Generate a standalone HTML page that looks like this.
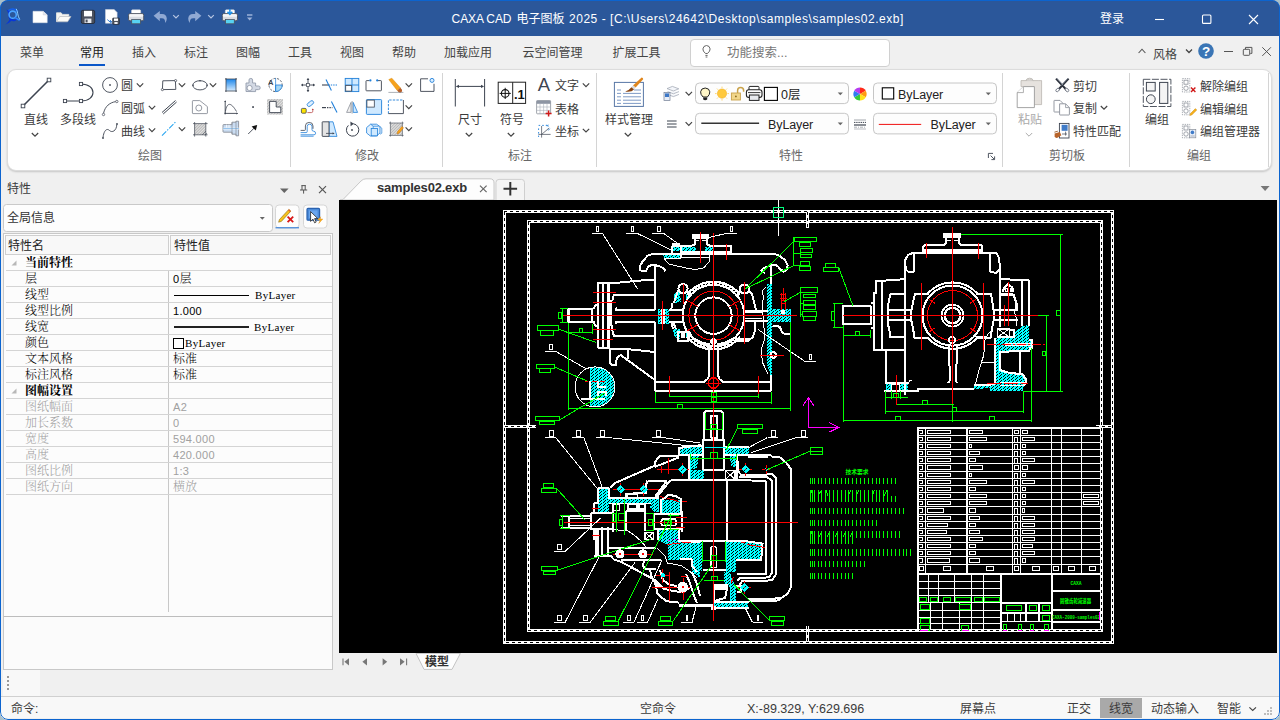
<!DOCTYPE html>
<html lang="zh-CN">
<head>
<meta charset="utf-8">
<title>CAXA CAD 电子图板 2025</title>
<style>
*{box-sizing:border-box;margin:0;padding:0}
html,body{width:1280px;height:720px;overflow:hidden;background:#a9c0ca}
body{position:relative;font-family:"Liberation Sans","Noto Sans CJK SC",sans-serif;font-size:12px;color:#3b3b3b}
.abs{position:absolute}
.t{position:absolute;white-space:nowrap;line-height:16px;height:16px}
#win{position:absolute;left:0;top:0;width:1280px;height:720px;background:#f0f0f0;border-radius:8px;overflow:hidden}
#title{position:absolute;left:0;top:0;width:1280px;height:36px;background:#2b579a;color:#fff}
#title .t{color:#fff;font-size:13px}
#edgeL{position:absolute;left:0;top:0;width:1px;height:720px;background:#0d5bc4}
#edgeR{position:absolute;left:1279px;top:0;width:1px;height:720px;background:#0d5bc4}
#edgeB{position:absolute;left:0;top:718.5px;width:1280px;height:1.5px;background:#0d5bc4}
#tabs .t{font-size:12px;color:#444;top:45px}
#ribbon{position:absolute;left:7px;top:69px;width:1265px;height:101.5px;background:#fff;border:1px solid #dcdcdc;border-radius:9px;box-shadow:0 1px 2px rgba(0,0,0,.18)}
.sep{position:absolute;top:75px;width:1px;height:92px;background:#d8d8d8}
.gl{position:absolute;z-index:6;top:148px;margin-top:1px;font-size:12px;color:#666;line-height:16px;white-space:nowrap}
.rl{position:absolute;z-index:6;margin-top:1px;font-size:12px;color:#3b3b3b;line-height:16px;white-space:nowrap}
.combo{position:absolute;height:21px;background:#fff;border:1px solid #c8c8c8;border-radius:4px}
svg{position:absolute;overflow:visible}
#panel{position:absolute;left:0;top:178px;width:336px;height:492px}
.pg{font-family:"Liberation Serif","Noto Serif CJK SC",serif;font-size:12px;color:#000;font-weight:300}
.mono{font-family:"Liberation Sans",sans-serif;font-size:11px;letter-spacing:.3px;font-weight:400}
.row{position:absolute;left:6px;width:326px;height:16px;border-bottom:1px solid #d4d4d4}
.row .n{position:absolute;left:19px;top:0px;line-height:16px;white-space:nowrap}
.row .v{position:absolute;left:167px;top:0px;line-height:16px;white-space:nowrap}
.row.dis{color:#a0a0a0}
.row.hd{font-weight:bold}
#canvas{position:absolute;left:339px;top:200px;width:938px;height:453px;background:#000}
#status{position:absolute;left:1px;top:696px;width:1278px;height:22px;background:#f8f8f8;border-top:1px solid #d0d0d0}
#status .t{top:4px;font-size:12px;color:#3b3b3b}
</style>
</head>
<body>
<div id="win">
<div id="title">
<div class="t" style="left:451.6px;top:11px;font-size:12px;letter-spacing:-0.12px">CAXA CAD</div><div class="t" style="left:516.5px;top:11px;font-size:12px">电子图板</div><div class="t" style="left:569px;top:11px;font-size:12px;letter-spacing:0.53px">2025 - [C:\Users\24642\Desktop\samples\samples02.exb]</div>
<div class="t" style="left:1100px;top:11px;font-size:12px">登录</div>
<!--TITLEICONS-->
</div>
<div id="tabs">
<div class="t" style="left:20px">菜单</div>
<div class="t" style="left:80px;color:#222">常用</div>
<div class="abs" style="left:79px;top:64px;width:26px;height:2px;background:#0a57c9"></div>
<div class="t" style="left:132px">插入</div>
<div class="t" style="left:184px">标注</div>
<div class="t" style="left:236px">图幅</div>
<div class="t" style="left:288px">工具</div>
<div class="t" style="left:340px">视图</div>
<div class="t" style="left:392px">帮助</div>
<div class="t" style="left:444px">加载应用</div>
<div class="t" style="left:522.5px">云空间管理</div>
<div class="t" style="left:612.5px">扩展工具</div>
<div class="abs" style="left:690px;top:39px;width:200px;height:28px;background:#fff;border:1px solid #d0d0d0;border-radius:4px"></div>
<div class="t" style="left:727px;color:#777;font-size:12.5px">功能搜索...</div>
<div class="t" style="left:1153px;top:46.5px">风格</div>
<!--TABICONS-->
</div>
<div id="ribbon"></div>
<svg style="left:0;top:0;z-index:5" width="1280" height="175" viewBox="0 0 1280 175">
<g><path d="M6,9.4 C9.2,11.6 7.6,16.6 9.6,19.4 C8.6,21.4 7,23.2 5.4,24.6 C7.8,23.8 9.8,22.4 11.2,20.8 C13.6,21.8 16.2,21 17.2,19.2 C14.8,19.8 12.4,19.4 11,18.2 C9.2,16 9.4,12.6 11.4,11 C9.6,10.6 7.6,10.2 6,9.4 Z" fill="#0836d8"/><circle cx="12.7" cy="14.7" r="3.6" fill="none" stroke="#4aa3ff" stroke-width="1.6"/><path d="M8.4,10.6 C11,8.2 15.6,8.4 17.6,11.6" stroke="#1260ee" stroke-width="1.6" fill="none"/><path d="M16.2,8.8 C18,11.6 17,14.4 19.8,19.8" stroke="#8accff" stroke-width="1" fill="none"/><path d="M14.8,17.4 L19.6,20.4" stroke="#2f86ff" stroke-width="1.4" fill="none"/></g>
<path d="M33,11.3 h10.2 l4,3.6 v7.8 h-14.2 z" fill="#fff" stroke="#d9dde6" stroke-width=".6"/><path d="M43.2,11.3 v3.6 h4" fill="#e6e9f0" stroke="#c9ced8" stroke-width=".5"/>
<path d="M56.5,21.8 v-9 h4.6 l1.4,1.6 h6.3 v2.2" fill="#f4f4f0" stroke="#e8e8e2" stroke-width=".8"/><path d="M56.5,21.8 l3.2,-5.3 h11.3 l-3.4,5.3 z" fill="#fbfbf7" stroke="#b9bcc0" stroke-width=".7"/>
<rect x="81.3" y="10.3" width="13.4" height="13.2" rx="1.6" fill="#4b515e" stroke="#232833" stroke-width=".8"/><rect x="84" y="10.8" width="8" height="5.6" fill="#fff"/><rect x="84.6" y="18.6" width="6.8" height="4.4" fill="#e9ebf0"/><rect x="85.6" y="19.6" width="2" height="2.8" fill="#4b515e"/>
<path d="M105.5,9.6 h8.6 l3,2.8 v10.8 h-11.6 z" fill="#fff" stroke="#d0d4dc" stroke-width=".6"/><path d="M107.5,19.5 q1,2.5 4,2.3 m-1.5,-1.6 l1.8,1.6 l-1.8,1.4" fill="none" stroke="#2a78d4" stroke-width="1"/><rect x="112.6" y="18" width="6.8" height="6.4" rx=".8" fill="#4b515e" stroke="#232833" stroke-width=".6"/><rect x="114" y="18.5" width="4" height="2.4" fill="#fff"/><rect x="114.4" y="22" width="3.2" height="2" fill="#e9ebf0"/>
<path d="M131.5,14 v-3.2 q0,-1 1,-1 h7.2 q1,0 1,1 v3.2 z" fill="#fff" stroke="#d5d8de" stroke-width=".5"/><rect x="128.5" y="13.6" width="15.2" height="7.2" rx="1.6" fill="#d9dce2" stroke="#4b515e" stroke-width=".9"/><rect x="129.1" y="14.2" width="14" height="2.6" rx="1" fill="#f4f5f7"/><rect x="131.7" y="19.4" width="8.8" height="4.4" fill="#58d3f2" stroke="#4b515e" stroke-width=".8"/>
<path d="M153.6,15.8 l6.2,-4.8 v3 h2.2 q4.6,.2 4.8,4.8 q0,2.4 -1.8,4.2 q.6,-4.6 -3.2,-4.8 h-2 v3 z" fill="#90a9d3"/>
<path d="M173.2,15.200000000000001 L176,18.0 L178.8,15.200000000000001" fill="none" stroke="#b7c6e2" stroke-width="1.2"/>
<path d="M201.4,15.8 l-6.2,-4.8 v3 h-2.2 q-4.6,.2 -4.8,4.8 q0,2.4 1.8,4.2 q-.6,-4.6 3.2,-4.8 h2 v3 z" fill="#90a9d3"/>
<path d="M208.2,15.200000000000001 L211,18.0 L213.8,15.200000000000001" fill="none" stroke="#b7c6e2" stroke-width="1.2"/>
<path d="M225.3,14 v-3.2 q0,-1 1,-1 h7.2 q1,0 1,1 v3.2 z" fill="#fff" stroke="#d5d8de" stroke-width=".5"/><rect x="222.3" y="13.6" width="15.2" height="7.2" rx="1.6" fill="#d9dce2" stroke="#4b515e" stroke-width=".9"/><rect x="222.9" y="14.2" width="14" height="2.6" rx="1" fill="#f4f5f7"/><rect x="225.5" y="19.4" width="8.8" height="4.4" fill="#58d3f2" stroke="#4b515e" stroke-width=".8"/><path d="M229.9,9 v5 m-2.4,-2.2 l2.4,2.6 l2.4,-2.6" fill="none" stroke="#1a8fe8" stroke-width="1.5"/>
<path d="M247,15 h5.4" stroke="#9db2d8" stroke-width="1.3"/><path d="M247,17.4 h5.4 l-2.7,3.2 z" fill="#9db2d8"/>
<path d="M1155,19.5 h9" stroke="#fff" stroke-width="1.1"/>
<rect x="1202.5" y="15" width="8.4" height="8.4" rx="1" fill="none" stroke="#fff" stroke-width="1.1"/>
<path d="M1249,15 l9,9 m0,-9 l-9,9" stroke="#fff" stroke-width="1.1"/>
<path d="M1138.6,53 l3.4,-3.8 l3.4,3.8" fill="none" stroke="#555" stroke-width="1.1"/>
<path d="M1186,49.5 L1189,52.5 L1192,49.5" fill="none" stroke="#444" stroke-width="1.3"/>
<circle cx="1206" cy="51" r="7.8" fill="#3a75b5"/><text x="1206" y="56" font-size="13.5" font-weight="bold" fill="#fff" text-anchor="middle" font-family="Liberation Sans,sans-serif">?</text>
<path d="M1224,51.5 h9" stroke="#555" stroke-width="1"/>
<path d="M1245.5,49 v-1.6 h6.4 v6 h-1.6" fill="none" stroke="#555" stroke-width="1"/><rect x="1243.3" y="49.3" width="6.4" height="6" rx=".8" fill="none" stroke="#555" stroke-width="1"/>
<path d="M1262.3,47.3 l8.6,8.6 m0,-8.6 l-8.6,8.6" stroke="#555" stroke-width="1"/>
<path d="M705.5,53.5 q-2.8,-2.4 -2.6,-4.6 q.4,-3.2 3.6,-3.4 q3.2,.2 3.6,3.4 q.2,2.2 -2.6,4.6 z M705.4,55.4 h2.2 M705.6,57 h1.8" fill="none" stroke="#666" stroke-width="1"/>
<path d="M23,106 L49,80" stroke="#3d4450" stroke-width="1.6"/><rect x="21.2" y="104.2" width="3.6" height="3.6" fill="#fff" stroke="#3d4450" stroke-width="0.9"/><rect x="47.2" y="78.2" width="3.6" height="3.6" fill="#fff" stroke="#3d4450" stroke-width="0.9"/>
<path d="M31.8,133.0 L35,136.2 L38.2,133.0" fill="none" stroke="#444" stroke-width="1.2"/>
<path d="M65,101 H81 M81,84 C97,84 97,101 81,101" fill="none" stroke="#3d4450" stroke-width="1.1"/><rect x="63.4" y="99.4" width="3.2" height="3.2" fill="#fff" stroke="#3d4450" stroke-width="0.9"/><rect x="79.4" y="99.4" width="3.2" height="3.2" fill="#fff" stroke="#3d4450" stroke-width="0.9"/><rect x="79.4" y="82.4" width="3.2" height="3.2" fill="#fff" stroke="#3d4450" stroke-width="0.9"/>
<circle cx="110" cy="85" r="7.4" fill="none" stroke="#3d4450" stroke-width=".9"/><rect x="109.2" y="84.2" width="1.6" height="1.6" fill="#3d4450"/>
<path d="M136.8,83.4 L140,86.6 L143.2,83.4" fill="none" stroke="#444" stroke-width="1.2"/>
<path d="M103.5,113.5 C105,106 110,102.5 115.8,101.6" fill="none" stroke="#3d4450" stroke-width=".9"/><circle cx="103.5" cy="114.5" r="1.2" fill="#fff" stroke="#3d4450" stroke-width=".7"/><circle cx="116.8" cy="101.5" r="1.2" fill="#fff" stroke="#3d4450" stroke-width=".7"/>
<path d="M148.8,105.9 L152,109.1 L155.2,105.9" fill="none" stroke="#444" stroke-width="1.2"/>
<path d="M103,137.5 C104,130 107,128 109.5,130.5 C112,133 116.5,131 116.8,124.5" fill="none" stroke="#3d4450" stroke-width=".9"/><circle cx="103" cy="138" r=".9" fill="#3d4450"/><circle cx="117" cy="124" r=".9" fill="#3d4450"/>
<path d="M148.8,128.4 L152,131.6 L155.2,128.4" fill="none" stroke="#444" stroke-width="1.2"/>
<path d="M162.8,80.8 L175.4,80.6 L175.8,89.4 L162.4,89.6 Z" fill="none" stroke="#3d4450" stroke-width=".9"/><circle cx="162.4" cy="89.6" r="1.1" fill="#fff" stroke="#3d4450" stroke-width=".7"/><circle cx="175.6" cy="80.6" r="1.1" fill="#fff" stroke="#3d4450" stroke-width=".7"/>
<path d="M178.8,83.4 L182,86.6 L185.2,83.4" fill="none" stroke="#444" stroke-width="1.2"/>
<ellipse cx="200" cy="85.3" rx="7.2" ry="4.6" fill="none" stroke="#3d4450" stroke-width=".9"/><circle cx="200" cy="80.7" r=".8" fill="#3d4450"/><circle cx="193" cy="85.3" r=".8" fill="#3d4450"/><circle cx="207" cy="85.3" r=".8" fill="#3d4450"/>
<path d="M209.8,83.4 L213,86.6 L216.2,83.4" fill="none" stroke="#444" stroke-width="1.2"/>
<defs><linearGradient id="gb" x1="0" y1="0" x2="0" y2="1"><stop offset="0" stop-color="#1b86ea"/><stop offset="1" stop-color="#d6ecff"/></linearGradient></defs>
<rect x="226" y="79" width="10" height="12" fill="url(#gb)"/><path d="M225,79 h12 M225,91 h12 M226,78 v14 M236,78 v14" stroke="#3d4450" stroke-width=".8"/>
<path d="M246,91.5 v-8.5 h3 v-3 q0,-1.6 1.8,-1.6 q1.8,0 1.8,1.6 v3 h3 v3 h3 q1.6,0 1.6,1.8 q0,1.8 -1.6,1.8 h-3 v2 z" fill="#d3d9e4" stroke="#949dad" stroke-width=".9"/><circle cx="249.6" cy="88" r="2.6" fill="#fff" stroke="#8a93a3" stroke-width=".8"/>
<circle cx="275.6" cy="85" r="6.6" fill="none" stroke="#3d4450" stroke-width=".8" stroke-dasharray="2.2 1.4"/><path d="M275.6,85 h6.6 a6.6,6.6 0 0 1 -6.6,6.6 z" fill="#a8d8f5" stroke="#1f7fd9" stroke-width=".8"/><path d="M275.6,78 v13.6" stroke="#1f7fd9" stroke-width=".7"/><text x="268" y="84.5" font-size="7.5" font-weight="bold" fill="#3d4450" font-family="Liberation Sans,sans-serif">A</text>
<path d="M162,112.5 L175.5,100.5 M163.2,114 L176.6,102" stroke="#3d4450" stroke-width="1"/>
<path d="M193,100.6 h6.8 l7.6,6 v6.4 q0,.6 -.6,.6 h-13.8 q-.6,0 -.6,-.6 v-11.8 q0,-.6 .6,-.6 z" fill="none" stroke="#8a8f98" stroke-width=".9"/><circle cx="198.8" cy="108" r="3" fill="none" stroke="#8a8f98" stroke-width=".9"/>
<path d="M225.2,101 v12.4 h12.2" fill="none" stroke="#3d4450" stroke-width=".9"/><path d="M225.4,111.5 C227,102 231,102 236.5,111.5" fill="none" stroke="#3d4450" stroke-width=".8"/><path d="M225.2,100.2 l-1,1.8 h2 z M238.2,113.4 l-1.8,-1 v2 z" fill="#3d4450"/><circle cx="225.2" cy="113.4" r=".9" fill="#3d4450"/>
<rect x="252.2" y="106.2" width="1.7" height="1.7" fill="#3d4450"/>
<defs><pattern id="hh" width="2" height="2" patternUnits="userSpaceOnUse" patternTransform="rotate(45)"><rect width="2" height="2" fill="#e3e3e3"/><rect width="1" height="2" fill="#b9b9b9"/></pattern></defs>
<rect x="267" y="99" width="16" height="15.6" fill="url(#hh)"/><path d="M269.6,101.4 h6.6 v5.6 h4.6 v5.6 h-11.2 z" fill="#fff" stroke="#3d4450" stroke-width=".9"/>
<path d="M162,135.7 L175.6,122" stroke="#2aa6f0" stroke-width="1.1" stroke-dasharray="6 1.4 1.4 1.4"/>
<path d="M178.8,127.4 L182,130.6 L185.2,127.4" fill="none" stroke="#444" stroke-width="1.2"/>
<rect x="194.6" y="123.6" width="11.2" height="11.2" fill="url(#hh)"/><path d="M193,123.6 h14.6 M193,134.8 h14.6 M194.6,122 v14.6 M205.8,122 v14.6" stroke="#3d4450" stroke-width=".7"/><path d="M205.8,131 l-3.6,3.8 M207,133 l-2,2.4" stroke="#3d4450" stroke-width=".6"/>
<path d="M223.6,124.6 h8.4 v-2.4 h4 v-1 h2.6 v14.6 h-2.6 v-1.6 h-4 v-2 h-8.4 q-.6,0 -.6,-.6 v-6.4 q0,-.6 .6,-.6 z" fill="#c9dcf2" stroke="#8a8f98" stroke-width=".9"/><path d="M223,128.6 h16" stroke="#fff" stroke-width="1.6"/><path d="M223,128.6 h16" stroke="#1f7fd9" stroke-width=".5"/><path d="M232,122.4 v11.8 M236,121.4 v14" stroke="#8a8f98" stroke-width=".7"/><path d="M226.6,124.6 v3 M229,124.6 v3" stroke="#fff" stroke-width=".8"/>
<path d="M248.2,134 L254.6,127.6" stroke="#3d4450" stroke-width=".9"/><path d="M257.2,125 l-1.4,5.6 l-4.2,-4.2 z" fill="#111"/>
<path d="M301.6,85 h13 M308,78.6 v13" stroke="#3d4450" stroke-width=".9"/><rect x="306.6" y="83.6" width="2.8" height="2.8" fill="#fff" stroke="#3d4450" stroke-width=".7"/><path d="M301,85 l2,-1.4 v2.8 z M315,85 l-2,-1.4 v2.8 z M308,78 l-1.4,2 h2.8 z M308,92 l-1.4,-2 h2.8 z" fill="#3d4450"/>
<path d="M322,85 h7.6" stroke="#3d4450" stroke-width="1.1"/><path d="M330.8,85 h6.6" stroke="#1f7fd9" stroke-width="1" stroke-dasharray="1.4 1"/><path d="M326,79.6 L331.4,90.6" stroke="#1f7fd9" stroke-width="1.1"/>
<rect x="345.2" y="78.4" width="13.6" height="13.2" fill="#cfe9ff" stroke="#1f7fd9" stroke-width=".9"/><path d="M352,78.4 v13.2 M345.2,85 h13.6" stroke="#1f7fd9" stroke-width=".9"/><rect x="345.7" y="85.5" width="5.8" height="5.6" fill="#fff" stroke="#3d4450" stroke-width=".8"/>
<path d="M369.6,80.6 h-3 q-.6,0 -.6,.6 v9 q0,.6 .6,.6 h14.2 q.6,0 .6,-.6 v-9 q0,-.6 -.6,-.6 h-3" fill="none" stroke="#3d4450" stroke-width=".9"/><circle cx="370.4" cy="80.4" r="1.1" fill="#1f7fd9"/><circle cx="377.2" cy="80.4" r="1.1" fill="#1f7fd9"/>
<path d="M388.8,79.6 l3,-1.4 l8.6,9.6 l-3.2,2.6 z" fill="#f6a21c" stroke="#d88a10" stroke-width=".5"/><path d="M397.2,90.4 l3.2,-2.6 l1.6,2 q.6,1.8 -1,2.6 q-1.6,.8 -2.6,-.4 z" fill="#b8602a"/><path d="M388.4,92.4 h15" stroke="#8a8f98" stroke-width=".7"/>
<path d="M405.6,83.4 L408.8,86.6 L412.0,83.4" fill="none" stroke="#444" stroke-width="1.2"/>
<path d="M428,78.8 h-7.4 v12.6 h13.4 v-7.6" fill="none" stroke="#3d4450" stroke-width=".9"/><circle cx="432" cy="80.4" r="2" fill="#dff0ff" stroke="#1f7fd9" stroke-width=".9"/>
<rect x="-1.8" y="-3.6" width="3.6" height="7.2" rx="1.8" transform="translate(310.4,103.6) rotate(52)" fill="#dff0ff" stroke="#1f7fd9" stroke-width=".8"/><rect x="301.4" y="108.4" width="4.8" height="4.8" rx="1" fill="#ffe400" stroke="#3d4450" stroke-width=".8"/><path d="M307.4,112.6 h4 q1.4,0 1.4,-1.4 v-1.6" fill="none" stroke="#b03030" stroke-width=".7"/><path d="M312.8,108.6 l-1,1.4 h2 z" fill="#b03030"/>
<path d="M322,107.6 h4" stroke="#3d4450" stroke-width="1.2"/><path d="M327,107.6 h5.4" stroke="#3d4450" stroke-width="1.1" stroke-dasharray="1.4 1"/><path d="M331.4,101.4 L337,112.6" stroke="#1f7fd9" stroke-width="1.1"/>
<path d="M351,102.4 v10 l-4.4,0 z" fill="#f0f0f0" stroke="#8a8f98" stroke-width=".8"/><path d="M353.2,102.4 v10 h4.4 z" fill="#cfe9ff" stroke="#1f7fd9" stroke-width=".8"/><path d="M352.1,101 v12.6" stroke="#8a8f98" stroke-width=".8"/>
<rect x="366.4" y="99.6" width="15.2" height="14.8" rx=".8" fill="#cfe9ff" stroke="#1f7fd9" stroke-width=".9"/><rect x="366.9" y="100.1" width="7.4" height="7" fill="#fff" stroke="#3d4450" stroke-width=".8"/>
<path d="M388.4,113.6 v-13.6 h15" fill="none" stroke="#1f7fd9" stroke-width=".9" stroke-dasharray="2.4 1.2"/><path d="M388.4,113.6 h15 v-13.6" fill="none" stroke="#3d4450" stroke-width=".9"/>
<path d="M405.6,105.4 L408.8,108.6 L412.0,105.4" fill="none" stroke="#444" stroke-width="1.2"/>
<path d="M300.6,132.6 h5.6 q1,0 1,-1 v-5 q0,-2.4 2.4,-2.4 q2.4,0 2.4,2.4 v3 q0,1.6 1.6,1.6 q2,.2 2,2 q0,1.6 -1.6,1.6 h-13.4" fill="none" stroke="#1f7fd9" stroke-width=".8"/><path d="M300.6,130.4 h4 q.8,0 .8,-.8 v-3.6 q0,-3.6 3.8,-3.6 q3.8,0 3.8,3.6 v2.8" fill="none" stroke="#3d4450" stroke-width=".8"/><path d="M300.6,136.2 h13" stroke="#1f7fd9" stroke-width=".8"/>
<path d="M329,121.8 h4 l4,14.6 h-8 z" fill="#cfe9ff" stroke="#1f7fd9" stroke-width=".8"/><path d="M322.6,121.8 h6.4 v14.6 h-6.4 q-.4,0 -.4,-.4 v-13.8 q0,-.4 .4,-.4 z" fill="#e4e4e4" stroke="#3d4450" stroke-width=".9"/><path d="M326,133.4 h7" stroke="#3d4450" stroke-width=".8"/><path d="M334.6,133.4 l-2,-1.2 v2.4 z" fill="#3d4450"/>
<path d="M348.4,125.4 a6.2,6.2 0 1 0 5,-1.6" fill="none" stroke="#3d4450" stroke-width="1"/><path d="M350.4,121.6 l3.4,2.2 l-3.2,2.4 z" fill="#3d4450"/><circle cx="352" cy="130" r=".9" fill="#3d4450"/>
<path d="M366.6,127.6 l4,-3.4 h6 l3.4,2.4 v6.4 l-3.6,3 h-6 l-3.8,-3 z" fill="#dff0ff" stroke="#1f7fd9" stroke-width=".8"/><rect x="371.2" y="128.4" width="6.2" height="7.4" fill="#cfe9ff" stroke="#1f7fd9" stroke-width=".8"/><path d="M370.6,124.2 l2.6,2 h5.6 M373.2,126.2 v2 M380,126.6 l1.8,1.6 v5 l-1.8,1" fill="none" stroke="#1f7fd9" stroke-width=".7"/>
<rect x="390.4" y="123" width="12" height="12.4" fill="url(#hh)"/><path d="M389,123 h14.6 M389,135.4 h14.6 M390.4,121.6 v15 M402.4,121.6 v15" stroke="#3d4450" stroke-width=".6"/><path d="M397.4,131.8 l4.4,-5.4 l1.8,1.4 l-4.4,5.4 l-2.2,.8 z" fill="#f6a21c" stroke="#b56a10" stroke-width=".4"/>
<path d="M405.6,127.4 L408.8,130.6 L412.0,127.4" fill="none" stroke="#444" stroke-width="1.2"/>
<path d="M455.3,79 v27.5 M484.6,79 v27.5 M456.6,86.4 h26.6" stroke="#3d4450" stroke-width="1"/><path d="M456,86.4 l3,-1.6 v3.2 z M484,86.4 l-3,-1.6 v3.2 z" fill="#3d4450"/>
<path d="M465.8,133.0 L469,136.2 L472.2,133.0" fill="none" stroke="#444" stroke-width="1.2"/>
<path d="M507.8,133.0 L511,136.2 L514.2,133.0" fill="none" stroke="#444" stroke-width="1.2"/>
<rect x="498.2" y="82.2" width="27.4" height="21.2" fill="#fff" stroke="#222" stroke-width="1"/><path d="M512.7,82.2 v21.2" stroke="#222" stroke-width="1"/><circle cx="505.2" cy="93.4" r="3.8" fill="none" stroke="#111" stroke-width="1.1"/><path d="M499.6,93.4 h11.2 M505.2,87.8 v11.2" stroke="#111" stroke-width="1"/><text x="514" y="98.6" font-size="13" font-weight="bold" fill="#111" font-family="Liberation Sans,sans-serif">.1</text>
<text x="544" y="91.4" font-size="18.5" fill="#3d4450" text-anchor="middle" font-family="Liberation Sans,sans-serif">A</text>
<path d="M582.8,83.4 L586,86.6 L589.2,83.4" fill="none" stroke="#444" stroke-width="1.2"/>
<path d="M582.8,128.8 L586,132.0 L589.2,128.8" fill="none" stroke="#444" stroke-width="1.2"/>
<rect x="536.6" y="100.6" width="14" height="13.2" rx=".8" fill="#fff" stroke="#8a8f98" stroke-width=".8"/><rect x="536.6" y="100.6" width="14" height="3.2" fill="#8d95a3"/><path d="M540,103.8 v10 M543.6,103.8 v10 M547,103.8 v10 M536.6,107 h14 M536.6,110.4 h14" stroke="#aab0bb" stroke-width=".6"/><path d="M545.6,113.4 h6 M548.6,110.4 v6" stroke="#d01818" stroke-width="1.5"/>
<path d="M541.6,126 v11.6 M538.4,134.4 h12.2 M541.6,134.4 l7.6,-6.4" stroke="#3d4450" stroke-width=".7"/><path d="M538.6,125.4 h10.4 M538.6,128.4 v8.6" stroke="#1f7fd9" stroke-width=".9" stroke-dasharray="1.6 2"/><path d="M546.8,124.8 l2,1.8 m0,-1.8 l-2,1.8 M548.2,130.6 l1.6,-2 m-1.6,0 l.8,1" stroke="#1f7fd9" stroke-width=".6" fill="none"/>
<rect x="614.4" y="82.4" width="29" height="24" fill="#fff" stroke="#5877a6" stroke-width="1"/><path d="M617,90 h4 M617,93.4 h4 M617,96.8 h4 M617,100.2 h4 M617,103.4 h4 M623,93.4 h18 M623,96.8 h18 M623,100.2 h18 M623,103.4 h18 M634,90 h7" stroke="#6f8fc0" stroke-width=".9"/><path d="M641.6,77.4 q1.6,.2 1.6,1.8 l-7.6,8.4 l-2.6,-2.2 z" fill="#e0861c"/><path d="M633,85.4 l2.6,2.2 l-1.6,1.8 l-2.6,-2.2 z" fill="#d9d9d9"/><path d="M631.4,87.2 l2.6,2.2 q-2.4,3.2 -8.8,2.2 q3.4,-.8 6.2,-4.4 z" fill="#8a4510"/>
<path d="M624.8,133.0 L628,136.2 L631.2,133.0" fill="none" stroke="#444" stroke-width="1.2"/>
<path d="M667,88.6 l5.4,-2.2 l6.4,2.4 l-5.4,2.2 z M667.6,91.6 l5.8,2.2 l5.6,-2.2 M667.6,94.4 l5.8,2.2 l5.6,-2.2" fill="#f4f6fa" stroke="#9aa1ad" stroke-width=".7"/><rect x="664" y="92.4" width="6" height="8" fill="#e8eef8" stroke="#6f7c92" stroke-width=".7"/><rect x="665" y="93.4" width="4" height="3.6" fill="#3d78c6"/>
<path d="M685.5999999999999,91.9 L688.8,95.1 L692.0,91.9" fill="none" stroke="#444" stroke-width="1.2"/>
<path d="M685.5999999999999,122.10000000000001 L688.8,125.3 L692.0,122.10000000000001" fill="none" stroke="#444" stroke-width="1.2"/>
<path d="M667,121 h9.6 M667,124 h9.6 M667,127 h9.6" stroke="#3d4450" stroke-width="1.1"/>
<rect x="695.5" y="83" width="153" height="20.6" rx="4" fill="#fdfdfd" stroke="#c6c6c6" stroke-width="1"/>
<rect x="695.5" y="113.3" width="153" height="20.6" rx="4" fill="#fdfdfd" stroke="#c6c6c6" stroke-width="1"/>
<rect x="873.5" y="83" width="123" height="20.6" rx="4" fill="#fdfdfd" stroke="#c6c6c6" stroke-width="1"/>
<rect x="873.5" y="113.3" width="123" height="20.6" rx="4" fill="#fdfdfd" stroke="#c6c6c6" stroke-width="1"/>
<path d="M837.6999999999999,92.5 h5.2 l-2.6,2.8 z" fill="#666"/>
<path d="M837.6999999999999,122.5 h5.2 l-2.6,2.8 z" fill="#666"/>
<path d="M985.6999999999999,92.5 h5.2 l-2.6,2.8 z" fill="#666"/>
<path d="M985.6999999999999,122.5 h5.2 l-2.6,2.8 z" fill="#666"/>
<path d="M703,97 q-2.6,-2.6 -2.4,-5.2 q.4,-3.6 4.6,-3.8 q4.2,.2 4.6,3.8 q.2,2.6 -2.4,5.2 z" fill="#fff6c8" stroke="#222" stroke-width="1"/><path d="M703.2,97.4 h4 v2 q-2,1.6 -4,0 z" fill="#222"/>
<circle cx="722" cy="93.6" r="4.6" fill="#ffc93c" stroke="#f2ae1c" stroke-width=".6"/><path d="M722,86.6 v1.6 M722,99 v1.6 M715,93.6 h1.6 M727.4,93.6 h1.6 M717,88.6 l1.2,1.2 M725.8,97.4 l1.2,1.2 M727,88.6 l-1.2,1.2 M718.2,97.4 l-1.2,1.2" stroke="#ffd873" stroke-width="1"/>
<path d="M737.6,93 v-2.6 q0,-3 3,-3 q3,0 3,3 v1.4" fill="none" stroke="#c9a24a" stroke-width="1.5"/><rect x="731.4" y="93" width="9" height="7" fill="#f1d68a" stroke="#c9a24a" stroke-width=".9"/><circle cx="735.9" cy="96.4" r=".9" fill="#8a6a1c"/>
<path d="M749,90 v-2.6 q0,-1 1,-1 h8 q1,0 1,1 v2.6" fill="#fff" stroke="#222" stroke-width="1"/><rect x="746.4" y="89.8" width="15.6" height="7.6" rx="2.4" fill="#fff" stroke="#222" stroke-width="1.1"/><path d="M748,92.6 h12.4" stroke="#222" stroke-width=".9"/><rect x="749.4" y="95" width="9.6" height="5.4" fill="#e8eaee" stroke="#222" stroke-width="1"/>
<rect x="764.4" y="87.4" width="13" height="13" fill="#fff" stroke="#000" stroke-width="1.1"/>
<rect x="882.3" y="87.8" width="11.4" height="11.2" fill="#fff" stroke="#000" stroke-width="1.1"/>
<path d="M701.3,123.3 h57.8" stroke="#333" stroke-width="1.6"/>
<path d="M878.8,124.4 h42.4" stroke="#f01010" stroke-width="1"/>
<path d="M860,94 L860.00,87.40 A6.6,6.6 0 0 1 865.72,90.70 Z" fill="#ff2a1a"/>
<path d="M860,94 L865.72,90.70 A6.6,6.6 0 0 1 865.72,97.30 Z" fill="#ff9a10"/>
<path d="M860,94 L865.72,97.30 A6.6,6.6 0 0 1 860.00,100.60 Z" fill="#ffe21a"/>
<path d="M860,94 L860.00,100.60 A6.6,6.6 0 0 1 854.28,97.30 Z" fill="#35c93a"/>
<path d="M860,94 L854.28,97.30 A6.6,6.6 0 0 1 854.28,90.70 Z" fill="#2f7cf0"/>
<path d="M860,94 L854.28,90.70 A6.6,6.6 0 0 1 860.00,87.40 Z" fill="#b63cf0"/>
<path d="M854,120 h12" stroke="#8a8f98" stroke-width=".8"/><path d="M854,122.4 h12" stroke="#3d4450" stroke-width="1" stroke-dasharray="1.4 .8"/><path d="M854,125 h12" stroke="#3d4450" stroke-width="1.2"/><path d="M854,127.2 h12" stroke="#8a8f98" stroke-width=".7" stroke-dasharray="3 1 1 1"/><path d="M854,129 h12" stroke="#8a8f98" stroke-width=".6"/>
<path d="M988.4,158 v-4.6 h4.6" fill="none" stroke="#3d4450" stroke-width=".9"/><path d="M990.6,155.6 l3.6,3.6 M994.6,156.4 v3.2 h-3.2" fill="none" stroke="#3d4450" stroke-width=".9"/>
<path d="M1021,80.6 h5 q.4,-2.4 3.6,-2.4 q3.2,0 3.6,2.4 h5 q3.4,0 3.4,0 v24 h-8 v-18 h-12.6 z" fill="#e6e2de" stroke="#b9b5b0" stroke-width=".8"/><path d="M1023.4,86.6 h11 v21 h-17.2 v-15 z" fill="#fff" stroke="#9a9a9a" stroke-width=".9"/><path d="M1023.4,86.6 v6 h-6.2" fill="#fff" stroke="#9a9a9a" stroke-width=".8"/><path d="M1026,80.6 q.6,-1.2 3.6,-1.2 q3,0 3.6,1.2 z" fill="#fff" stroke="#b9b5b0" stroke-width=".6"/>
<path d="M1025.8,133.0 L1029,136.2 L1032.2,133.0" fill="none" stroke="#aaa" stroke-width="1"/>
<path d="M1056,78.6 L1066.6,90 M1068.6,78.6 L1058,90" stroke="#2c313b" stroke-width="2"/><path d="M1056.6,78 L1063.4,85.6 M1068,78 L1061.2,85.6" stroke="#8d95a3" stroke-width=".8"/><ellipse cx="1057.6" cy="90" rx="2" ry="1.4" transform="rotate(-45 1057.6 90)" fill="#fff" stroke="#6f7683" stroke-width=".9"/><ellipse cx="1067" cy="90" rx="2" ry="1.4" transform="rotate(45 1067 90)" fill="#fff" stroke="#6f7683" stroke-width=".9"/>
<path d="M1054.4,100.4 h5.6 l3,3 v8.6 h-8.6 q-.4,0 -.4,-.4 v-10.8 q0,-.4 .4,-.4 z" fill="#fff" stroke="#8a8f98" stroke-width=".9"/><path d="M1059.6,103.8 h6 l3.8,3.8 v7 q0,.4 -.4,.4 h-9 q-.4,0 -.4,-.4 z" fill="#fff" stroke="#8a8f98" stroke-width=".9"/><path d="M1065.6,103.8 v3.8 h3.8" fill="none" stroke="#8a8f98" stroke-width=".8"/>
<path d="M1100.8,106.0 L1104,109.19999999999999 L1107.2,106.0" fill="none" stroke="#444" stroke-width="1.2"/>
<rect x="1059.4" y="123.4" width="9.6" height="14.6" fill="#fff" stroke="#3d4450" stroke-width=".9"/><rect x="1061.6" y="124.8" width="6" height="6" fill="#3f7bc8"/><path d="M1062,134 h5 M1065.6,131.6 v4" stroke="#3d4450" stroke-width=".7"/><path d="M1054.6,133.6 l5.2,-1.6 l1.6,3.2 l-4.4,2.8 q-1.8,.2 -2.4,-1.4 z" fill="#b8642a"/><path d="M1054.4,132.2 l3.4,-1" stroke="#8a4510" stroke-width=".8"/>
<rect x="1143.3" y="79.3" width="27.6" height="27.2" fill="none" stroke="#3d4450" stroke-width=".9" stroke-dasharray="7 1.6"/><rect x="1146.4" y="82.4" width="8.8" height="8.6" fill="#f4f4f4" stroke="#3d4450" stroke-width="1"/><circle cx="1150.8" cy="99.2" r="4.4" fill="#f4f4f4" stroke="#3d4450" stroke-width="1"/><rect x="1159.6" y="82.4" width="8.2" height="21" fill="#f4f4f4" stroke="#3d4450" stroke-width="1"/>
<rect x="1182.4" y="78.6" width="7.4" height="13.4" fill="none" stroke="#8a8f98" stroke-width=".7" stroke-dasharray="1.4 .9"/><rect x="1184" y="80.19999999999999" width="4" height="4" fill="#fff" stroke="#8a8f98" stroke-width=".8"/><circle cx="1186" cy="88.19999999999999" r="2.2" fill="#fff" stroke="#8a8f98" stroke-width=".8"/>
<rect x="1182.4" y="101.4" width="7.4" height="13.4" fill="none" stroke="#8a8f98" stroke-width=".7" stroke-dasharray="1.4 .9"/><rect x="1184" y="103.0" width="4" height="4" fill="#fff" stroke="#8a8f98" stroke-width=".8"/><circle cx="1186" cy="111.0" r="2.2" fill="#fff" stroke="#8a8f98" stroke-width=".8"/>
<rect x="1182.4" y="124.4" width="7.4" height="13.4" fill="none" stroke="#8a8f98" stroke-width=".7" stroke-dasharray="1.4 .9"/><rect x="1184" y="126.0" width="4" height="4" fill="#fff" stroke="#8a8f98" stroke-width=".8"/><circle cx="1186" cy="134.0" r="2.2" fill="#fff" stroke="#8a8f98" stroke-width=".8"/>
<path d="M1191,87.6 l4.4,4.4 m0,-4.4 l-4.4,4.4" stroke="#d01818" stroke-width="1.4"/>
<path d="M1190.4,113.6 l5,-5 l1.4,1.4 l-5,5 l-2,.6 z" fill="#f6b01c" stroke="#c8860c" stroke-width=".4"/>
<rect x="1189.4" y="129.4" width="6.4" height="8.4" fill="#e8eef8" stroke="#8a8f98" stroke-width=".7"/><circle cx="1192.4" cy="132.4" r="1.8" fill="#3f7bc8"/><path d="M1190.4,136 h4.4" stroke="#8a8f98" stroke-width=".6"/>
<path d="M290.5,73 V167" stroke="#d4d4d4" stroke-width="1"/><path d="M442.5,73 V167" stroke="#d4d4d4" stroke-width="1"/><path d="M596.5,73 V167" stroke="#d4d4d4" stroke-width="1"/><path d="M1002.5,73 V167" stroke="#d4d4d4" stroke-width="1"/><path d="M1129.5,73 V167" stroke="#d4d4d4" stroke-width="1"/><path d="M1268.5,73 V167" stroke="#d4d4d4" stroke-width="1"/></svg>
<div class="rl" style="left:24px;top:111px;">直线</div>
<div class="rl" style="left:60px;top:111px;">多段线</div>
<div class="rl" style="left:121px;top:77px;">圆</div>
<div class="rl" style="left:121px;top:100px;">圆弧</div>
<div class="rl" style="left:121px;top:123px;">曲线</div>
<div class="gl" style="left:138px;top:147px;">绘图</div>
<div class="gl" style="left:355px;top:147px;">修改</div>
<div class="rl" style="left:458px;top:111px;">尺寸</div>
<div class="rl" style="left:500px;top:111px;">符号</div>
<div class="rl" style="left:555px;top:77px;">文字</div>
<div class="rl" style="left:555px;top:101px;">表格</div>
<div class="rl" style="left:555px;top:123px;">坐标</div>
<div class="gl" style="left:508px;top:147px;">标注</div>
<div class="rl" style="left:605px;top:111px;">样式管理</div>
<div class="rl" style="left:781px;top:85.5px;font-size:12.5px;color:#222">0层</div>
<div class="rl" style="left:768px;top:116px;font-size:12.5px;color:#222;letter-spacing:-0.1px">ByLayer</div>
<div class="rl" style="left:898px;top:85.5px;font-size:12.5px;color:#222;letter-spacing:-0.1px">ByLayer</div>
<div class="rl" style="left:930.5px;top:116px;font-size:12.5px;color:#222;letter-spacing:-0.1px">ByLayer</div>
<div class="gl" style="left:779px;top:147px;">特性</div>
<div class="rl" style="left:1018px;top:111px;color:#aaa">粘贴</div>
<div class="rl" style="left:1073px;top:77.5px;">剪切</div>
<div class="rl" style="left:1073px;top:100px;">复制</div>
<div class="rl" style="left:1073px;top:123px;">特性匹配</div>
<div class="gl" style="left:1049px;top:147px;">剪切板</div>
<div class="rl" style="left:1145px;top:111px;">编组</div>
<div class="rl" style="left:1200px;top:78px;">解除编组</div>
<div class="rl" style="left:1200px;top:100.5px;">编辑编组</div>
<div class="rl" style="left:1200px;top:123px;">编组管理器</div>
<div class="gl" style="left:1187px;top:147px;">编组</div>
<div class="t" style="left:7px;top:181px;font-size:12px;color:#3b3b3b">特性</div>
<svg style="left:0;top:170px" width="340" height="70" viewBox="0 170 340 70"><path d="M280,188.4 h8.6 l-4.3,4.6 z" fill="#666"/><path d="M301.4,185.6 h4.4 M302,185.6 v4.4 M305.2,185.6 v4.4 M300,190 h7.2 M303.6,190 v3.6" fill="none" stroke="#555" stroke-width="1"/><path d="M319,186.2 l7,7 m0,-7 l-7,7" stroke="#555" stroke-width="1.2"/><rect x="3.5" y="204.5" width="269" height="27" rx="3" fill="#fdfdfd" stroke="#c9c9c9"/><path d="M259.8,217 h5 l-2.5,2.8 z" fill="#666"/><rect x="275.5" y="205" width="23.5" height="23" rx="3.5" fill="#fdfdfd" stroke="#d6d6d6"/><path d="M275.5,227.8 h23.5" stroke="#1c6fd6" stroke-width="1"/><rect x="303.5" y="205" width="23.5" height="23" rx="3.5" fill="#fdfdfd" stroke="#d6d6d6"/><path d="M279.4,219.6 l9.4,-10.2 l2,1.8 l-9.4,10.2 l-2.8,.8 z" fill="#f6c21c" stroke="#8a6a1c" stroke-width=".6"/><path d="M288,210.2 l2,1.8 l1,-1 l-2,-1.8 z" fill="#e8602a"/><path d="M287.6,216.6 l5.6,5.6 m0,-5.6 l-5.6,5.6" stroke="#d81818" stroke-width="1.8"/><rect x="307" y="208.4" width="12.6" height="11.8" rx="1" fill="#4a8ad8" stroke="#2a62b0" stroke-width="1.2"/><rect x="309" y="210.4" width="8.6" height="7.8" fill="#6aa6ee"/><path d="M310.6,211.6 v9.8 l2.4,-2.2 l1.6,3.6 l1.6,-.8 l-1.6,-3.4 h3.2 z" fill="#fff" stroke="#222" stroke-width=".8"/><path d="M320.6,216.8 l-3,3.2 h2.6 l-1.4,3.4 l4,-4.4 h-2.6 z" fill="#ffb21c" stroke="#e08a10" stroke-width=".4"/></svg>
<div class="t" style="left:7px;top:210px;font-size:12px;color:#333">全局信息</div>
<div class="abs" style="left:3px;top:233px;width:330px;height:384px;background:#fcfcfc;border:1px solid #c8c8c8"></div>
<div class="abs" style="left:3px;top:616px;width:330px;height:54px;background:#fbfbfb;border:1px solid #c8c8c8;border-top:1px solid #bdbdbd"></div>
<div class="abs" style="left:5px;top:235px;width:164px;height:20px;background:#f8f8f8;border:1px solid #cfcfcf"></div>
<div class="abs" style="left:170px;top:235px;width:161px;height:20px;background:#f8f8f8;border:1px solid #cfcfcf"></div>
<div class="t" style="left:8px;top:238px;font-size:12px;color:#222">特性名</div>
<div class="t" style="left:174px;top:238px;font-size:12px;color:#222">特性值</div>
<div class="abs" style="left:168px;top:271px;width:1px;height:341px;background:#c8c8c8"></div>
<div class="row pg hd" style="top:255px"><span class="n" style="left:19px">当前特性</span><svg style="left:4px;top:4px" width="8" height="8"><path d="M6.5,1.5 v5 h-5 z" fill="#b8b8b8"/></svg></div>
<div class="row pg " style="top:271px"><span class="n">层</span><span class="v"><span class="mono">0</span>层</span></div>
<div class="row pg " style="top:287px"><span class="n">线型</span><span class="v"><span class="abs" style="left:1px;top:8px;width:75px;height:1px;background:#000"></span><span class="abs" style="left:82px;top:0;font-size:11px;letter-spacing:.3px">ByLayer</span></span></div>
<div class="row pg " style="top:303px"><span class="n">线型比例</span><span class="v"><span class="mono">1.000</span></span></div>
<div class="row pg " style="top:319px"><span class="n">线宽</span><span class="v"><span class="abs" style="left:1px;top:7px;width:75px;height:2px;background:#222"></span><span class="abs" style="left:81px;top:0;font-size:11px;letter-spacing:.3px">ByLayer</span></span></div>
<div class="row pg " style="top:335px"><span class="n">颜色</span><span class="v"><span class="abs" style="left:0;top:3px;width:11px;height:11px;border:1px solid #000;background:#fff"></span><span class="abs" style="left:12px;top:0;font-size:11px;letter-spacing:.3px">ByLayer</span></span></div>
<div class="row pg " style="top:351px"><span class="n">文本风格</span><span class="v">标准</span></div>
<div class="row pg " style="top:367px"><span class="n">标注风格</span><span class="v">标准</span></div>
<div class="row pg hd" style="top:383px"><span class="n" style="left:19px">图幅设置</span><svg style="left:4px;top:4px" width="8" height="8"><path d="M6.5,1.5 v5 h-5 z" fill="#b8b8b8"/></svg></div>
<div class="row pg dis" style="top:399px"><span class="n">图纸幅面</span><span class="v"><span class="mono">A2</span></span></div>
<div class="row pg dis" style="top:415px"><span class="n">加长系数</span><span class="v"><span class="mono">0</span></span></div>
<div class="row pg dis" style="top:431px"><span class="n">宽度</span><span class="v"><span class="mono">594.000</span></span></div>
<div class="row pg dis" style="top:447px"><span class="n">高度</span><span class="v"><span class="mono">420.000</span></span></div>
<div class="row pg dis" style="top:463px"><span class="n">图纸比例</span><span class="v"><span class="mono">1:3</span></span></div>
<div class="row pg dis" style="top:479px"><span class="n">图纸方向</span><span class="v">横放</span></div>
<svg style="left:335px;top:176px" width="945" height="26" viewBox="335 176 945 26"><path d="M340,200 L343,199.5 L361,181 Q363,178.8 366,178.8 H490 Q494,178.8 494,183 V200 Z" fill="#fdfdfd" stroke="#c8c8c8" stroke-width="1"/><path d="M496,200 V182.5 Q496,179.4 499,179.4 H521.5 Q524.5,179.4 524.5,182.5 V200" fill="#f4f4f4" stroke="#cfcfcf" stroke-width="1"/><path d="M503.5,188.8 h13.6 M510.3,182 v13.6" stroke="#333" stroke-width="2"/><path d="M480,185.6 l6.6,6.6 m0,-6.6 l-6.6,6.6" stroke="#666" stroke-width="1.2"/><path d="M1260.6,186 h9 l-4.5,5 z" fill="#777"/></svg>
<div class="t" style="left:377px;top:180px;font-size:13px;color:#333;font-weight:bold;letter-spacing:-0.2px">samples02.exb</div>
<svg style="left:335px;top:650px" width="200" height="24" viewBox="335 650 200 24"><path d="M416,653.4 L424,669.4 H452 L460.4,653.4 Z" fill="#fdfdfd" stroke="#c4c4c4" stroke-width="1"/><path d="M343,658.4 v6.8" stroke="#777" stroke-width="1.1"/><path d="M349,658.2 v7.2 l-4.6,-3.6 z" fill="#777"/><path d="M367,658.2 v7.2 l-4.6,-3.6 z" fill="#777"/><path d="M382.6,658.2 v7.2 l4.6,-3.6 z" fill="#777"/><path d="M400,658.2 v7.2 l4.6,-3.6 z" fill="#777"/><path d="M406.6,658.4 v6.8" stroke="#777" stroke-width="1.1"/></svg>
<div class="t" style="left:425px;top:654px;font-size:12px;color:#333;font-weight:bold">模型</div>
<div class="abs" style="left:3px;top:670px;width:37px;height:26px;background:#f8f8f8"></div>
<svg style="left:0;top:670px" width="20" height="26"><g fill="#999"><rect x="7" y="6" width="2" height="2"/><rect x="7" y="10" width="2" height="2"/><rect x="7" y="14" width="2" height="2"/><rect x="7" y="18" width="2" height="2"/></g></svg>
<div id="canvas">
<svg style="left:0;top:0" width="938" height="453" viewBox="339 200 938 453" shape-rendering="crispEdges" text-rendering="optimizeSpeed"><defs><pattern id="ch" width="4" height="3" patternUnits="userSpaceOnUse" x="339" y="200"><rect width="4" height="3" fill="#0ff"/><rect x="0" y="2" width="1" height="1" fill="#000"/><rect x="1" y="1" width="1" height="1" fill="#000"/><rect x="2" y="0" width="1" height="1" fill="#000"/></pattern></defs><rect x="504.5" y="211.5" width="608.0" height="431.0" fill="none" stroke="#fff" stroke-width="3"/><rect x="504.5" y="211.5" width="608.0" height="431.0" fill="none" stroke="#000" stroke-width="1" stroke-dasharray="3 3" stroke-dashoffset="1"/>
<rect x="528.5" y="221.5" width="573.0" height="409.0" fill="none" stroke="#fff" stroke-width="3"/><rect x="528.5" y="221.5" width="573.0" height="409.0" fill="none" stroke="#000" stroke-width="1" stroke-dasharray="3 3" stroke-dashoffset="1"/>
<rect x="806.0" y="212" width="3" height="16" fill="#fff"/><path d="M807.5,212 V228" stroke="#000" stroke-width="1" stroke-dasharray="3 3"/>
<rect x="806.0" y="626" width="3" height="16" fill="#fff"/><path d="M807.5,626 V642" stroke="#000" stroke-width="1" stroke-dasharray="3 3"/>
<rect x="505" y="425.0" width="31" height="3" fill="#fff"/><path d="M505,426.5 H536" stroke="#000" stroke-width="1" stroke-dasharray="3 3"/>
<rect x="1096" y="425.0" width="16" height="3" fill="#fff"/><path d="M1096,426.5 H1112" stroke="#000" stroke-width="1" stroke-dasharray="3 3"/>
<path d="M778.5,200 V236" stroke="#fff" stroke-width="1"/>
<rect x="773.5" y="207.5" width="10" height="10" fill="none" stroke="#00ff7f" stroke-width="1"/>
<rect x="917" y="427" width="183" height="2" fill="#fff"/>
<rect x="917" y="427" width="2" height="204" fill="#fff"/>
<rect x="925" y="428" width="1" height="146" fill="#fff"/>
<rect x="966" y="428" width="2" height="146" fill="#fff"/>
<rect x="1012" y="428" width="1" height="146" fill="#fff"/>
<rect x="1020" y="428" width="1" height="146" fill="#fff"/>
<rect x="1051" y="428" width="1" height="146" fill="#fff"/>
<rect x="1061" y="428" width="1" height="146" fill="#fff"/>
<rect x="1081" y="428" width="1" height="146" fill="#fff"/>
<rect x="917" y="435" width="183" height="1" fill="#fff"/>
<rect x="917" y="442" width="183" height="1" fill="#fff"/>
<rect x="917" y="449" width="183" height="1" fill="#fff"/>
<rect x="917" y="456" width="183" height="1" fill="#fff"/>
<rect x="917" y="463" width="183" height="1" fill="#fff"/>
<rect x="917" y="471" width="183" height="1" fill="#fff"/>
<rect x="917" y="478" width="183" height="1" fill="#fff"/>
<rect x="917" y="485" width="183" height="1" fill="#fff"/>
<rect x="917" y="492" width="183" height="1" fill="#fff"/>
<rect x="917" y="499" width="183" height="1" fill="#fff"/>
<rect x="917" y="506" width="183" height="1" fill="#fff"/>
<rect x="917" y="514" width="183" height="1" fill="#fff"/>
<rect x="917" y="521" width="183" height="1" fill="#fff"/>
<rect x="917" y="528" width="183" height="1" fill="#fff"/>
<rect x="917" y="535" width="183" height="1" fill="#fff"/>
<rect x="917" y="542" width="183" height="1" fill="#fff"/>
<rect x="917" y="549" width="183" height="1" fill="#fff"/>
<rect x="917" y="556" width="183" height="1" fill="#fff"/>
<rect x="917" y="564" width="183" height="1" fill="#fff"/>
<rect x="917" y="573" width="183" height="2" fill="#fff"/>
<rect x="919" y="430" width="4" height="1" fill="#fff"/>
<rect x="922" y="430" width="1" height="4" fill="#fff"/>
<rect x="920" y="433" width="3" height="1" fill="#fff"/>
<rect x="927" y="430" width="24" height="1" fill="#fff"/><rect x="927" y="433" width="24" height="1" fill="#fff"/><rect x="927" y="430" width="1" height="4" fill="#fff"/><rect x="950" y="430" width="1" height="4" fill="#fff"/>
<rect x="969" y="430" width="14" height="1" fill="#fff"/><rect x="969" y="433" width="14" height="1" fill="#fff"/><rect x="969" y="430" width="1" height="4" fill="#fff"/><rect x="982" y="430" width="1" height="4" fill="#fff"/>
<rect x="1014" y="430" width="5" height="1" fill="#fff"/><rect x="1014" y="433" width="5" height="1" fill="#fff"/><rect x="1014" y="430" width="1" height="4" fill="#fff"/><rect x="1018" y="430" width="1" height="4" fill="#fff"/>
<rect x="1022" y="430" width="6" height="1" fill="#fff"/><rect x="1022" y="433" width="6" height="1" fill="#fff"/><rect x="1022" y="430" width="1" height="4" fill="#fff"/><rect x="1027" y="430" width="1" height="4" fill="#fff"/>
<rect x="919" y="437" width="4" height="1" fill="#fff"/>
<rect x="922" y="437" width="1" height="4" fill="#fff"/>
<rect x="920" y="440" width="3" height="1" fill="#fff"/>
<rect x="927" y="437" width="24" height="1" fill="#fff"/><rect x="927" y="440" width="24" height="1" fill="#fff"/><rect x="927" y="437" width="1" height="4" fill="#fff"/><rect x="950" y="437" width="1" height="4" fill="#fff"/>
<rect x="969" y="437" width="18" height="1" fill="#fff"/><rect x="969" y="440" width="18" height="1" fill="#fff"/><rect x="969" y="437" width="1" height="4" fill="#fff"/><rect x="986" y="437" width="1" height="4" fill="#fff"/>
<rect x="1014" y="437" width="1" height="5" fill="#fff"/>
<rect x="1014" y="437" width="4" height="1" fill="#fff"/>
<rect x="1017" y="437" width="1" height="5" fill="#fff"/>
<rect x="1022" y="437" width="13" height="1" fill="#fff"/><rect x="1022" y="440" width="13" height="1" fill="#fff"/><rect x="1022" y="437" width="1" height="4" fill="#fff"/><rect x="1034" y="437" width="1" height="4" fill="#fff"/>
<rect x="919" y="444" width="4" height="1" fill="#fff"/>
<rect x="922" y="444" width="1" height="4" fill="#fff"/>
<rect x="920" y="447" width="3" height="1" fill="#fff"/>
<rect x="927" y="444" width="24" height="1" fill="#fff"/><rect x="927" y="447" width="24" height="1" fill="#fff"/><rect x="927" y="444" width="1" height="4" fill="#fff"/><rect x="950" y="444" width="1" height="4" fill="#fff"/>
<rect x="969" y="444" width="3" height="1" fill="#fff"/><rect x="969" y="447" width="3" height="1" fill="#fff"/><rect x="969" y="444" width="1" height="4" fill="#fff"/><rect x="971" y="444" width="1" height="4" fill="#fff"/>
<rect x="1014" y="444" width="1" height="5" fill="#fff"/>
<rect x="1014" y="444" width="4" height="1" fill="#fff"/>
<rect x="1017" y="444" width="1" height="5" fill="#fff"/>
<rect x="1022" y="444" width="4" height="1" fill="#fff"/><rect x="1022" y="447" width="4" height="1" fill="#fff"/><rect x="1022" y="444" width="1" height="4" fill="#fff"/><rect x="1025" y="444" width="1" height="4" fill="#fff"/>
<rect x="919" y="451" width="4" height="1" fill="#fff"/>
<rect x="922" y="451" width="1" height="4" fill="#fff"/>
<rect x="920" y="454" width="3" height="1" fill="#fff"/>
<rect x="927" y="451" width="24" height="1" fill="#fff"/><rect x="927" y="454" width="24" height="1" fill="#fff"/><rect x="927" y="451" width="1" height="4" fill="#fff"/><rect x="950" y="451" width="1" height="4" fill="#fff"/>
<rect x="969" y="451" width="11" height="1" fill="#fff"/><rect x="969" y="454" width="11" height="1" fill="#fff"/><rect x="969" y="451" width="1" height="4" fill="#fff"/><rect x="979" y="451" width="1" height="4" fill="#fff"/>
<rect x="1014" y="451" width="1" height="5" fill="#fff"/>
<rect x="1014" y="451" width="4" height="1" fill="#fff"/>
<rect x="1017" y="451" width="1" height="5" fill="#fff"/>
<rect x="1022" y="451" width="4" height="1" fill="#fff"/><rect x="1022" y="454" width="4" height="1" fill="#fff"/><rect x="1022" y="451" width="1" height="4" fill="#fff"/><rect x="1025" y="451" width="1" height="4" fill="#fff"/>
<rect x="919" y="458" width="4" height="1" fill="#fff"/>
<rect x="922" y="458" width="1" height="4" fill="#fff"/>
<rect x="920" y="461" width="3" height="1" fill="#fff"/>
<rect x="927" y="458" width="24" height="1" fill="#fff"/><rect x="927" y="461" width="24" height="1" fill="#fff"/><rect x="927" y="458" width="1" height="4" fill="#fff"/><rect x="950" y="458" width="1" height="4" fill="#fff"/>
<rect x="969" y="458" width="7" height="1" fill="#fff"/><rect x="969" y="461" width="7" height="1" fill="#fff"/><rect x="969" y="458" width="1" height="4" fill="#fff"/><rect x="975" y="458" width="1" height="4" fill="#fff"/>
<rect x="1014" y="458" width="1" height="5" fill="#fff"/>
<rect x="1014" y="458" width="4" height="1" fill="#fff"/>
<rect x="1017" y="458" width="1" height="5" fill="#fff"/>
<rect x="1022" y="458" width="13" height="1" fill="#fff"/><rect x="1022" y="461" width="13" height="1" fill="#fff"/><rect x="1022" y="458" width="1" height="4" fill="#fff"/><rect x="1034" y="458" width="1" height="4" fill="#fff"/>
<rect x="919" y="465" width="4" height="1" fill="#fff"/>
<rect x="922" y="465" width="1" height="5" fill="#fff"/>
<rect x="920" y="469" width="3" height="1" fill="#fff"/>
<rect x="927" y="465" width="24" height="1" fill="#fff"/><rect x="927" y="469" width="24" height="1" fill="#fff"/><rect x="927" y="465" width="1" height="5" fill="#fff"/><rect x="950" y="465" width="1" height="5" fill="#fff"/>
<rect x="969" y="465" width="14" height="1" fill="#fff"/><rect x="969" y="469" width="14" height="1" fill="#fff"/><rect x="969" y="465" width="1" height="5" fill="#fff"/><rect x="982" y="465" width="1" height="5" fill="#fff"/>
<rect x="1014" y="465" width="5" height="1" fill="#fff"/><rect x="1014" y="469" width="5" height="1" fill="#fff"/><rect x="1014" y="465" width="1" height="5" fill="#fff"/><rect x="1018" y="465" width="1" height="5" fill="#fff"/>
<rect x="1022" y="465" width="6" height="1" fill="#fff"/><rect x="1022" y="469" width="6" height="1" fill="#fff"/><rect x="1022" y="465" width="1" height="5" fill="#fff"/><rect x="1027" y="465" width="1" height="5" fill="#fff"/>
<rect x="919" y="473" width="4" height="1" fill="#fff"/>
<rect x="922" y="473" width="1" height="4" fill="#fff"/>
<rect x="920" y="476" width="3" height="1" fill="#fff"/>
<rect x="927" y="473" width="24" height="1" fill="#fff"/><rect x="927" y="476" width="24" height="1" fill="#fff"/><rect x="927" y="473" width="1" height="4" fill="#fff"/><rect x="950" y="473" width="1" height="4" fill="#fff"/>
<rect x="969" y="473" width="3" height="1" fill="#fff"/><rect x="969" y="476" width="3" height="1" fill="#fff"/><rect x="969" y="473" width="1" height="4" fill="#fff"/><rect x="971" y="473" width="1" height="4" fill="#fff"/>
<rect x="1014" y="473" width="1" height="5" fill="#fff"/>
<rect x="1014" y="473" width="4" height="1" fill="#fff"/>
<rect x="1017" y="473" width="1" height="5" fill="#fff"/>
<rect x="1022" y="473" width="4" height="1" fill="#fff"/><rect x="1022" y="476" width="4" height="1" fill="#fff"/><rect x="1022" y="473" width="1" height="4" fill="#fff"/><rect x="1025" y="473" width="1" height="4" fill="#fff"/>
<rect x="919" y="480" width="4" height="1" fill="#fff"/>
<rect x="922" y="480" width="1" height="4" fill="#fff"/>
<rect x="920" y="483" width="3" height="1" fill="#fff"/>
<rect x="927" y="480" width="24" height="1" fill="#fff"/><rect x="927" y="483" width="24" height="1" fill="#fff"/><rect x="927" y="480" width="1" height="4" fill="#fff"/><rect x="950" y="480" width="1" height="4" fill="#fff"/>
<rect x="969" y="480" width="18" height="1" fill="#fff"/><rect x="969" y="483" width="18" height="1" fill="#fff"/><rect x="969" y="480" width="1" height="4" fill="#fff"/><rect x="986" y="480" width="1" height="4" fill="#fff"/>
<rect x="1014" y="480" width="1" height="5" fill="#fff"/>
<rect x="1014" y="480" width="4" height="1" fill="#fff"/>
<rect x="1017" y="480" width="1" height="5" fill="#fff"/>
<rect x="1022" y="480" width="13" height="1" fill="#fff"/><rect x="1022" y="483" width="13" height="1" fill="#fff"/><rect x="1022" y="480" width="1" height="4" fill="#fff"/><rect x="1034" y="480" width="1" height="4" fill="#fff"/>
<rect x="919" y="487" width="4" height="1" fill="#fff"/>
<rect x="922" y="487" width="1" height="4" fill="#fff"/>
<rect x="920" y="490" width="3" height="1" fill="#fff"/>
<rect x="927" y="487" width="24" height="1" fill="#fff"/><rect x="927" y="490" width="24" height="1" fill="#fff"/><rect x="927" y="487" width="1" height="4" fill="#fff"/><rect x="950" y="487" width="1" height="4" fill="#fff"/>
<rect x="969" y="487" width="7" height="1" fill="#fff"/><rect x="969" y="490" width="7" height="1" fill="#fff"/><rect x="969" y="487" width="1" height="4" fill="#fff"/><rect x="975" y="487" width="1" height="4" fill="#fff"/>
<rect x="1014" y="487" width="1" height="5" fill="#fff"/>
<rect x="1014" y="487" width="4" height="1" fill="#fff"/>
<rect x="1017" y="487" width="1" height="5" fill="#fff"/>
<rect x="1022" y="487" width="4" height="1" fill="#fff"/><rect x="1022" y="490" width="4" height="1" fill="#fff"/><rect x="1022" y="487" width="1" height="4" fill="#fff"/><rect x="1025" y="487" width="1" height="4" fill="#fff"/>
<rect x="919" y="494" width="4" height="1" fill="#fff"/>
<rect x="922" y="494" width="1" height="4" fill="#fff"/>
<rect x="920" y="497" width="3" height="1" fill="#fff"/>
<rect x="927" y="494" width="24" height="1" fill="#fff"/><rect x="927" y="497" width="24" height="1" fill="#fff"/><rect x="927" y="494" width="1" height="4" fill="#fff"/><rect x="950" y="494" width="1" height="4" fill="#fff"/>
<rect x="969" y="494" width="18" height="1" fill="#fff"/><rect x="969" y="497" width="18" height="1" fill="#fff"/><rect x="969" y="494" width="1" height="4" fill="#fff"/><rect x="986" y="494" width="1" height="4" fill="#fff"/>
<rect x="1014" y="494" width="1" height="5" fill="#fff"/>
<rect x="1014" y="494" width="4" height="1" fill="#fff"/>
<rect x="1017" y="494" width="1" height="5" fill="#fff"/>
<rect x="1022" y="494" width="4" height="1" fill="#fff"/><rect x="1022" y="497" width="4" height="1" fill="#fff"/><rect x="1022" y="494" width="1" height="4" fill="#fff"/><rect x="1025" y="494" width="1" height="4" fill="#fff"/>
<rect x="1083" y="494" width="16" height="1" fill="#fff"/><rect x="1083" y="497" width="16" height="1" fill="#fff"/><rect x="1083" y="494" width="1" height="4" fill="#fff"/><rect x="1098" y="494" width="1" height="4" fill="#fff"/>
<rect x="919" y="501" width="4" height="1" fill="#fff"/>
<rect x="922" y="501" width="1" height="4" fill="#fff"/>
<rect x="920" y="504" width="3" height="1" fill="#fff"/>
<rect x="927" y="501" width="24" height="1" fill="#fff"/><rect x="927" y="504" width="24" height="1" fill="#fff"/><rect x="927" y="501" width="1" height="4" fill="#fff"/><rect x="950" y="501" width="1" height="4" fill="#fff"/>
<rect x="969" y="501" width="18" height="1" fill="#fff"/><rect x="969" y="504" width="18" height="1" fill="#fff"/><rect x="969" y="501" width="1" height="4" fill="#fff"/><rect x="986" y="501" width="1" height="4" fill="#fff"/>
<rect x="1014" y="501" width="1" height="5" fill="#fff"/>
<rect x="1014" y="501" width="4" height="1" fill="#fff"/>
<rect x="1017" y="501" width="1" height="5" fill="#fff"/>
<rect x="1022" y="501" width="4" height="1" fill="#fff"/><rect x="1022" y="504" width="4" height="1" fill="#fff"/><rect x="1022" y="501" width="1" height="4" fill="#fff"/><rect x="1025" y="501" width="1" height="4" fill="#fff"/>
<rect x="1083" y="501" width="16" height="1" fill="#fff"/><rect x="1083" y="504" width="16" height="1" fill="#fff"/><rect x="1083" y="501" width="1" height="4" fill="#fff"/><rect x="1098" y="501" width="1" height="4" fill="#fff"/>
<rect x="919" y="508" width="4" height="1" fill="#fff"/>
<rect x="922" y="508" width="1" height="5" fill="#fff"/>
<rect x="920" y="512" width="3" height="1" fill="#fff"/>
<rect x="927" y="508" width="17" height="1" fill="#fff"/><rect x="927" y="512" width="17" height="1" fill="#fff"/><rect x="927" y="508" width="1" height="5" fill="#fff"/><rect x="943" y="508" width="1" height="5" fill="#fff"/>
<rect x="969" y="508" width="7" height="1" fill="#fff"/><rect x="969" y="512" width="7" height="1" fill="#fff"/><rect x="969" y="508" width="1" height="5" fill="#fff"/><rect x="975" y="508" width="1" height="5" fill="#fff"/>
<rect x="1014" y="508" width="1" height="6" fill="#fff"/>
<rect x="1014" y="508" width="4" height="1" fill="#fff"/>
<rect x="1017" y="508" width="1" height="6" fill="#fff"/>
<rect x="1022" y="508" width="3" height="1" fill="#fff"/><rect x="1022" y="512" width="3" height="1" fill="#fff"/><rect x="1022" y="508" width="1" height="5" fill="#fff"/><rect x="1024" y="508" width="1" height="5" fill="#fff"/>
<rect x="919" y="516" width="4" height="1" fill="#fff"/>
<rect x="922" y="516" width="1" height="4" fill="#fff"/>
<rect x="920" y="519" width="3" height="1" fill="#fff"/>
<rect x="927" y="516" width="24" height="1" fill="#fff"/><rect x="927" y="519" width="24" height="1" fill="#fff"/><rect x="927" y="516" width="1" height="4" fill="#fff"/><rect x="950" y="516" width="1" height="4" fill="#fff"/>
<rect x="969" y="516" width="11" height="1" fill="#fff"/><rect x="969" y="519" width="11" height="1" fill="#fff"/><rect x="969" y="516" width="1" height="4" fill="#fff"/><rect x="979" y="516" width="1" height="4" fill="#fff"/>
<rect x="1014" y="516" width="1" height="5" fill="#fff"/>
<rect x="1014" y="516" width="4" height="1" fill="#fff"/>
<rect x="1017" y="516" width="1" height="5" fill="#fff"/>
<rect x="1022" y="516" width="13" height="1" fill="#fff"/><rect x="1022" y="519" width="13" height="1" fill="#fff"/><rect x="1022" y="516" width="1" height="4" fill="#fff"/><rect x="1034" y="516" width="1" height="4" fill="#fff"/>
<rect x="919" y="523" width="4" height="1" fill="#fff"/>
<rect x="922" y="523" width="1" height="4" fill="#fff"/>
<rect x="920" y="526" width="3" height="1" fill="#fff"/>
<rect x="927" y="523" width="21" height="1" fill="#fff"/><rect x="927" y="526" width="21" height="1" fill="#fff"/><rect x="927" y="523" width="1" height="4" fill="#fff"/><rect x="947" y="523" width="1" height="4" fill="#fff"/>
<rect x="969" y="523" width="7" height="1" fill="#fff"/><rect x="969" y="526" width="7" height="1" fill="#fff"/><rect x="969" y="523" width="1" height="4" fill="#fff"/><rect x="975" y="523" width="1" height="4" fill="#fff"/>
<rect x="1014" y="523" width="1" height="5" fill="#fff"/>
<rect x="1014" y="523" width="4" height="1" fill="#fff"/>
<rect x="1017" y="523" width="1" height="5" fill="#fff"/>
<rect x="1022" y="523" width="13" height="1" fill="#fff"/><rect x="1022" y="526" width="13" height="1" fill="#fff"/><rect x="1022" y="523" width="1" height="4" fill="#fff"/><rect x="1034" y="523" width="1" height="4" fill="#fff"/>
<rect x="919" y="530" width="4" height="1" fill="#fff"/>
<rect x="922" y="530" width="1" height="4" fill="#fff"/>
<rect x="920" y="533" width="3" height="1" fill="#fff"/>
<rect x="927" y="530" width="20" height="1" fill="#fff"/><rect x="927" y="533" width="20" height="1" fill="#fff"/><rect x="927" y="530" width="1" height="4" fill="#fff"/><rect x="946" y="530" width="1" height="4" fill="#fff"/>
<rect x="969" y="530" width="11" height="1" fill="#fff"/><rect x="969" y="533" width="11" height="1" fill="#fff"/><rect x="969" y="530" width="1" height="4" fill="#fff"/><rect x="979" y="530" width="1" height="4" fill="#fff"/>
<rect x="1014" y="530" width="1" height="5" fill="#fff"/>
<rect x="1014" y="530" width="4" height="1" fill="#fff"/>
<rect x="1017" y="530" width="1" height="5" fill="#fff"/>
<rect x="1022" y="530" width="13" height="1" fill="#fff"/><rect x="1022" y="533" width="13" height="1" fill="#fff"/><rect x="1022" y="530" width="1" height="4" fill="#fff"/><rect x="1034" y="530" width="1" height="4" fill="#fff"/>
<rect x="919" y="537" width="4" height="1" fill="#fff"/>
<rect x="922" y="537" width="1" height="4" fill="#fff"/>
<rect x="920" y="540" width="3" height="1" fill="#fff"/>
<rect x="927" y="537" width="24" height="1" fill="#fff"/><rect x="927" y="540" width="24" height="1" fill="#fff"/><rect x="927" y="537" width="1" height="4" fill="#fff"/><rect x="950" y="537" width="1" height="4" fill="#fff"/>
<rect x="969" y="537" width="14" height="1" fill="#fff"/><rect x="969" y="540" width="14" height="1" fill="#fff"/><rect x="969" y="537" width="1" height="4" fill="#fff"/><rect x="982" y="537" width="1" height="4" fill="#fff"/>
<rect x="1014" y="537" width="1" height="5" fill="#fff"/>
<rect x="1014" y="537" width="4" height="1" fill="#fff"/>
<rect x="1017" y="537" width="1" height="5" fill="#fff"/>
<rect x="1022" y="537" width="13" height="1" fill="#fff"/><rect x="1022" y="540" width="13" height="1" fill="#fff"/><rect x="1022" y="537" width="1" height="4" fill="#fff"/><rect x="1034" y="537" width="1" height="4" fill="#fff"/>
<rect x="919" y="544" width="4" height="1" fill="#fff"/>
<rect x="922" y="544" width="1" height="4" fill="#fff"/>
<rect x="920" y="547" width="3" height="1" fill="#fff"/>
<rect x="927" y="544" width="24" height="1" fill="#fff"/><rect x="927" y="547" width="24" height="1" fill="#fff"/><rect x="927" y="544" width="1" height="4" fill="#fff"/><rect x="950" y="544" width="1" height="4" fill="#fff"/>
<rect x="969" y="544" width="7" height="1" fill="#fff"/><rect x="969" y="547" width="7" height="1" fill="#fff"/><rect x="969" y="544" width="1" height="4" fill="#fff"/><rect x="975" y="544" width="1" height="4" fill="#fff"/>
<rect x="1014" y="544" width="1" height="5" fill="#fff"/>
<rect x="1014" y="544" width="4" height="1" fill="#fff"/>
<rect x="1017" y="544" width="1" height="5" fill="#fff"/>
<rect x="1022" y="544" width="11" height="1" fill="#fff"/><rect x="1022" y="547" width="11" height="1" fill="#fff"/><rect x="1022" y="544" width="1" height="4" fill="#fff"/><rect x="1032" y="544" width="1" height="4" fill="#fff"/>
<rect x="919" y="551" width="4" height="1" fill="#fff"/>
<rect x="922" y="551" width="1" height="4" fill="#fff"/>
<rect x="920" y="554" width="3" height="1" fill="#fff"/>
<rect x="927" y="551" width="24" height="1" fill="#fff"/><rect x="927" y="554" width="24" height="1" fill="#fff"/><rect x="927" y="551" width="1" height="4" fill="#fff"/><rect x="950" y="551" width="1" height="4" fill="#fff"/>
<rect x="969" y="551" width="7" height="1" fill="#fff"/><rect x="969" y="554" width="7" height="1" fill="#fff"/><rect x="969" y="551" width="1" height="4" fill="#fff"/><rect x="975" y="551" width="1" height="4" fill="#fff"/>
<rect x="1014" y="551" width="1" height="5" fill="#fff"/>
<rect x="1014" y="551" width="4" height="1" fill="#fff"/>
<rect x="1017" y="551" width="1" height="5" fill="#fff"/>
<rect x="1022" y="551" width="13" height="1" fill="#fff"/><rect x="1022" y="554" width="13" height="1" fill="#fff"/><rect x="1022" y="551" width="1" height="4" fill="#fff"/><rect x="1034" y="551" width="1" height="4" fill="#fff"/>
<rect x="919" y="558" width="4" height="1" fill="#fff"/>
<rect x="922" y="558" width="1" height="5" fill="#fff"/>
<rect x="920" y="562" width="3" height="1" fill="#fff"/>
<rect x="927" y="558" width="23" height="1" fill="#fff"/><rect x="927" y="562" width="23" height="1" fill="#fff"/><rect x="927" y="558" width="1" height="5" fill="#fff"/><rect x="949" y="558" width="1" height="5" fill="#fff"/>
<rect x="969" y="558" width="11" height="1" fill="#fff"/><rect x="969" y="562" width="11" height="1" fill="#fff"/><rect x="969" y="558" width="1" height="5" fill="#fff"/><rect x="979" y="558" width="1" height="5" fill="#fff"/>
<rect x="1014" y="558" width="1" height="6" fill="#fff"/>
<rect x="1014" y="558" width="4" height="1" fill="#fff"/>
<rect x="1017" y="558" width="1" height="6" fill="#fff"/>
<rect x="1022" y="558" width="4" height="1" fill="#fff"/><rect x="1022" y="562" width="4" height="1" fill="#fff"/><rect x="1022" y="558" width="1" height="5" fill="#fff"/><rect x="1025" y="558" width="1" height="5" fill="#fff"/>
<rect x="919" y="566" width="5" height="1" fill="#fff"/><rect x="919" y="570" width="5" height="1" fill="#fff"/><rect x="919" y="566" width="1" height="5" fill="#fff"/><rect x="923" y="566" width="1" height="5" fill="#fff"/>
<rect x="943" y="566" width="8" height="1" fill="#fff"/><rect x="943" y="570" width="8" height="1" fill="#fff"/><rect x="943" y="566" width="1" height="5" fill="#fff"/><rect x="950" y="566" width="1" height="5" fill="#fff"/>
<rect x="986" y="566" width="8" height="1" fill="#fff"/><rect x="986" y="570" width="8" height="1" fill="#fff"/><rect x="986" y="566" width="1" height="5" fill="#fff"/><rect x="993" y="566" width="1" height="5" fill="#fff"/>
<rect x="1014" y="566" width="5" height="1" fill="#fff"/><rect x="1014" y="570" width="5" height="1" fill="#fff"/><rect x="1014" y="566" width="1" height="5" fill="#fff"/><rect x="1018" y="566" width="1" height="5" fill="#fff"/>
<rect x="1032" y="566" width="8" height="1" fill="#fff"/><rect x="1032" y="570" width="8" height="1" fill="#fff"/><rect x="1032" y="566" width="1" height="5" fill="#fff"/><rect x="1039" y="566" width="1" height="5" fill="#fff"/>
<rect x="1053" y="566" width="6" height="1" fill="#fff"/><rect x="1053" y="570" width="6" height="1" fill="#fff"/><rect x="1053" y="566" width="1" height="5" fill="#fff"/><rect x="1058" y="566" width="1" height="5" fill="#fff"/>
<rect x="1068" y="566" width="7" height="1" fill="#fff"/><rect x="1068" y="570" width="7" height="1" fill="#fff"/><rect x="1068" y="566" width="1" height="5" fill="#fff"/><rect x="1074" y="566" width="1" height="5" fill="#fff"/>
<rect x="1089" y="566" width="7" height="1" fill="#fff"/><rect x="1089" y="570" width="7" height="1" fill="#fff"/><rect x="1089" y="566" width="1" height="5" fill="#fff"/><rect x="1095" y="566" width="1" height="5" fill="#fff"/>
<rect x="917" y="581" width="84" height="1" fill="#fff"/>
<rect x="917" y="588" width="84" height="1" fill="#fff"/>
<rect x="917" y="595" width="84" height="1" fill="#fff"/>
<rect x="917" y="602" width="84" height="1" fill="#fff"/>
<rect x="917" y="610" width="84" height="1" fill="#fff"/>
<rect x="917" y="617" width="84" height="1" fill="#fff"/>
<rect x="917" y="623" width="84" height="1" fill="#fff"/>
<rect x="928" y="574" width="1" height="29" fill="#fff"/>
<rect x="938" y="574" width="1" height="29" fill="#fff"/>
<rect x="954" y="574" width="1" height="29" fill="#fff"/>
<rect x="971" y="574" width="1" height="29" fill="#fff"/>
<rect x="983" y="574" width="1" height="29" fill="#fff"/>
<rect x="930" y="602" width="1" height="28" fill="#fff"/>
<rect x="942" y="602" width="1" height="28" fill="#fff"/>
<rect x="959" y="602" width="1" height="28" fill="#fff"/>
<rect x="971" y="602" width="1" height="28" fill="#fff"/>
<rect x="983" y="602" width="1" height="28" fill="#fff"/>
<rect x="1000" y="574" width="2" height="56" fill="#fff"/>
<rect x="1000" y="602" width="52" height="2" fill="#fff"/>
<rect x="1000" y="612" width="52" height="2" fill="#fff"/>
<rect x="1000" y="621" width="52" height="1" fill="#fff"/>
<rect x="1025" y="602" width="2" height="20" fill="#fff"/>
<rect x="1038" y="602" width="2" height="20" fill="#fff"/>
<rect x="1007" y="613" width="1" height="9" fill="#fff"/>
<rect x="1014" y="613" width="1" height="9" fill="#fff"/>
<rect x="1020" y="613" width="1" height="9" fill="#fff"/>
<rect x="1051" y="574" width="2" height="56" fill="#fff"/>
<rect x="1051" y="590" width="50" height="2" fill="#fff"/>
<rect x="1051" y="609" width="50" height="2" fill="#fff"/>
<rect x="1051" y="621" width="50" height="2" fill="#fff"/>
<rect x="919.688" y="597.312" width="7.1875" height="4.6875" fill="none" stroke="#0f0" stroke-width="1"/>
<rect x="930" y="597.312" width="7.8125" height="4.6875" fill="none" stroke="#0f0" stroke-width="1"/>
<rect x="943.125" y="597.312" width="7.8125" height="4.6875" fill="none" stroke="#0f0" stroke-width="1"/>
<rect x="955.312" y="597.312" width="15.625" height="4.6875" fill="none" stroke="#0f0" stroke-width="1"/>
<rect x="974.062" y="597.312" width="8.125" height="4.6875" fill="none" stroke="#0f0" stroke-width="1"/>
<rect x="984.688" y="597.312" width="15.1562" height="4.6875" fill="none" stroke="#0f0" stroke-width="1"/>
<rect x="920.156" y="604.344" width="8.90625" height="5.15625" fill="none" stroke="#0f0" stroke-width="1"/>
<rect x="959.219" y="604.344" width="11.4062" height="5.15625" fill="none" stroke="#0f0" stroke-width="1"/>
<rect x="920.156" y="618.406" width="8.90625" height="4.84375" fill="none" stroke="#0f0" stroke-width="1"/>
<rect x="920.156" y="625.125" width="8.90625" height="5" fill="none" stroke="#0f0" stroke-width="1"/>
<rect x="961.25" y="625.125" width="7.34375" height="5" fill="none" stroke="#0f0" stroke-width="1"/>
<rect x="1006.41" y="605.281" width="15.3125" height="5.46875" fill="none" stroke="#0f0" stroke-width="1"/>
<rect x="1029.53" y="605.281" width="7.03125" height="5.46875" fill="none" stroke="#0f0" stroke-width="1"/>
<rect x="1042.5" y="605.281" width="7.03125" height="5.46875" fill="none" stroke="#0f0" stroke-width="1"/>
<rect x="1042.5" y="615.281" width="6.5625" height="5.46875" fill="none" stroke="#0f0" stroke-width="1"/>
<polyline points="1003.28,630 1003.28,624.344 1006.56,624.344 1006.56,630" fill="none" stroke="#0f0" stroke-width="1" />
<polyline points="1018.28,630 1018.28,624.344 1021.72,624.344 1021.72,630" fill="none" stroke="#0f0" stroke-width="1" />
<polyline points="1030.31,630 1030.31,624.344 1033.75,624.344 1033.75,630" fill="none" stroke="#0f0" stroke-width="1" />
<polyline points="1044.06,630 1044.06,624.344 1048.75,624.344 1048.75,630" fill="none" stroke="#0f0" stroke-width="1" />
<polyline points="920.156,630.5 927.969,630.5" fill="none" stroke="#f0f" stroke-width="1" />
<polyline points="961.562,630.5 968.594,630.5" fill="none" stroke="#f0f" stroke-width="1" />
<polyline points="1003.28,630.5 1006.56,630.5" fill="none" stroke="#f0f" stroke-width="1" />
<polyline points="1018.28,630.5 1021.72,630.5" fill="none" stroke="#f0f" stroke-width="1" />
<polyline points="1030.31,630.5 1033.75,630.5" fill="none" stroke="#f0f" stroke-width="1" />
<polyline points="1044.06,630.5 1048.75,630.5" fill="none" stroke="#f0f" stroke-width="1" />
<text x="1076" y="585" font-size="5.5" fill="#0f0" text-anchor="middle" font-family="Liberation Mono,monospace" font-weight="bold" textLength="11" lengthAdjust="spacingAndGlyphs">CAXA</text>
<text x="1075.6" y="603" font-size="6" fill="#0f0" text-anchor="middle" font-family="Liberation Sans,Noto Sans CJK SC,sans-serif" font-weight="bold" textLength="31" lengthAdjust="spacingAndGlyphs">圆锥齿轮减速器</text>
<text x="1076" y="619" font-size="5.5" fill="#0f0" text-anchor="middle" font-family="Liberation Mono,monospace" font-weight="bold" textLength="48" lengthAdjust="spacingAndGlyphs">CAXA-2009-samples02</text>
<polyline points="1099.5,612 1099.5,620" fill="none" stroke="#f0f" stroke-width="1" />
<text x="857" y="473.6" font-size="6" fill="#0f0" text-anchor="middle" font-family="Liberation Sans,Noto Sans CJK SC,sans-serif" font-weight="bold" textLength="23" lengthAdjust="spacingAndGlyphs">技术要求</text>
<path d="M810.5,478 V484 M812.5,478 V484 M814.5,478 V484 M818.5,478 V484 M821.5,478 V484 M825.5,478 V484 M829.5,478 V484 M833.5,478 V484 M837.5,478 V484 M841.5,478 V484 M845.5,478 V484 M848.5,478 V484 M852.5,478 V484 M856.5,478 V484 M860.5,478 V484 M864.5,478 V484 M868.5,478 V484 M872.5,478 V484 M876.5,478 V484 M879.5,478 V484 M883.5,478 V484 M887.5,478 V484 M891.5,478 V484 M895.5,478 V484" stroke="#0f0" stroke-width="1"/>
<path d="M810.5,490 V496 M812.5,490 V496 M814.5,490 V496 M818.5,490 V496 M821.5,490 V496 M825.5,490 V496 M829.5,490 V496 M833.5,490 V496 M837.5,490 V496 M841.5,490 V496 M845.5,490 V496 M848.5,490 V496 M852.5,490 V496 M856.5,490 V496 M860.5,490 V496 M864.5,490 V496 M868.5,490 V496 M872.5,490 V496 M876.5,490 V496 M879.5,490 V496 M883.5,490 V496 M887.5,490 V496" stroke="#0f0" stroke-width="1"/>
<path d="M810.5,496 V502 M812.5,496 V502 M814.5,496 V502 M818.5,496 V502 M821.5,496 V502 M825.5,496 V502 M829.5,496 V502 M833.5,496 V502 M837.5,496 V502 M841.5,496 V502 M845.5,496 V502 M848.5,496 V502 M852.5,496 V502 M856.5,496 V502 M860.5,496 V502 M864.5,496 V502 M868.5,496 V502 M872.5,496 V502 M876.5,496 V502 M879.5,496 V502 M883.5,496 V502 M887.5,496 V502 M891.5,496 V502 M895.5,496 V502" stroke="#0f0" stroke-width="1"/>
<path d="M810.5,508 V514 M812.5,508 V514 M814.5,508 V514 M818.5,508 V514 M821.5,508 V514 M825.5,508 V514 M829.5,508 V514 M833.5,508 V514 M837.5,508 V514 M841.5,508 V514 M845.5,508 V514 M848.5,508 V514 M852.5,508 V514 M856.5,508 V514 M860.5,508 V514 M864.5,508 V514 M868.5,508 V514 M872.5,508 V514 M876.5,508 V514 M879.5,508 V514 M883.5,508 V514 M887.5,508 V514 M891.5,508 V514 M895.5,508 V514 M899.5,508 V514 M903.5,508 V514" stroke="#0f0" stroke-width="1"/>
<path d="M810.5,520 V526 M812.5,520 V526 M814.5,520 V526 M818.5,520 V526 M821.5,520 V526 M825.5,520 V526 M829.5,520 V526 M833.5,520 V526 M837.5,520 V526 M841.5,520 V526 M845.5,520 V526 M848.5,520 V526 M852.5,520 V526 M856.5,520 V526 M860.5,520 V526 M864.5,520 V526 M868.5,520 V526 M872.5,520 V526 M876.5,520 V526" stroke="#0f0" stroke-width="1"/>
<path d="M810.5,531 V537.5 M812.5,531 V537.5 M814.5,531 V537.5 M818.5,531 V537.5 M821.5,531 V537.5 M825.5,531 V537.5 M829.5,531 V537.5 M833.5,531 V537.5 M837.5,531 V537.5 M841.5,531 V537.5 M845.5,531 V537.5 M848.5,531 V537.5 M852.5,531 V537.5 M856.5,531 V537.5 M860.5,531 V537.5 M864.5,531 V537.5 M868.5,531 V537.5 M872.5,531 V537.5 M876.5,531 V537.5 M879.5,531 V537.5 M883.5,531 V537.5 M887.5,531 V537.5 M891.5,531 V537.5 M895.5,531 V537.5 M899.5,531 V537.5" stroke="#0f0" stroke-width="1"/>
<path d="M810.5,537.5 V543.5 M812.5,537.5 V543.5 M814.5,537.5 V543.5 M818.5,537.5 V543.5 M821.5,537.5 V543.5 M825.5,537.5 V543.5 M829.5,537.5 V543.5 M833.5,537.5 V543.5 M837.5,537.5 V543.5 M841.5,537.5 V543.5 M845.5,537.5 V543.5 M848.5,537.5 V543.5 M852.5,537.5 V543.5" stroke="#0f0" stroke-width="1"/>
<path d="M810.5,549 V556 M812.5,549 V556 M814.5,549 V556 M818.5,549 V556 M821.5,549 V556 M825.5,549 V556 M829.5,549 V556 M833.5,549 V556 M837.5,549 V556 M841.5,549 V556 M845.5,549 V556 M848.5,549 V556 M852.5,549 V556 M856.5,549 V556 M860.5,549 V556 M864.5,549 V556 M868.5,549 V556 M872.5,549 V556 M876.5,549 V556 M879.5,549 V556 M883.5,549 V556 M887.5,549 V556 M891.5,549 V556 M895.5,549 V556 M899.5,549 V556 M903.5,549 V556 M906.5,549 V556 M910.5,549 V556" stroke="#0f0" stroke-width="1"/>
<path d="M810.5,561 V567 M812.5,561 V567 M814.5,561 V567 M818.5,561 V567 M821.5,561 V567 M825.5,561 V567 M829.5,561 V567 M833.5,561 V567 M837.5,561 V567 M841.5,561 V567 M845.5,561 V567 M848.5,561 V567 M852.5,561 V567 M856.5,561 V567 M860.5,561 V567 M864.5,561 V567" stroke="#0f0" stroke-width="1"/>
<path d="M810.5,573 V579 M812.5,573 V579 M814.5,573 V579 M818.5,573 V579 M821.5,573 V579 M825.5,573 V579 M829.5,573 V579 M833.5,573 V579 M837.5,573 V579 M841.5,573 V579 M845.5,573 V579 M848.5,573 V579 M852.5,573 V579" stroke="#0f0" stroke-width="1"/>
<path d="M811,490 l2,6 M818,496 l3,-5 M826,490 l2,6 M848,496 l3,-6 M856,496 l3,-6 M872,496 l2.5,-6 M884,496 l3,-6" stroke="#0f0" stroke-width="1"/>
<path d="M811,531 l2,6 M819,537 l3,-6 M827,537 l3,-6 M835,537 l3,-6 M843,537 l3,-6 M850,537 l3,-6" stroke="#0f0" stroke-width="1"/>
<polyline points="808.5,427.5 808.5,397.5" fill="none" stroke="#f0f" stroke-width="1" />
<polyline points="803,405.6 808.5,397.5 813.75,405.6" fill="none" stroke="#f0f" stroke-width="1" />
<polyline points="808.5,427.5 838.5,427.5" fill="none" stroke="#f0f" stroke-width="1" />
<polyline points="829.4,422.5 838.5,427.5 829.4,432" fill="none" stroke="#f0f" stroke-width="1" />
<rect x="672" y="246.5" width="24" height="4" fill="url(#ch)"/>
<rect x="705" y="246.5" width="7.5" height="4" fill="url(#ch)"/>
<polygon points="662,254 680.6,254 680.6,258.4 665,258.4" fill="url(#ch)" stroke="none"/>
<polygon points="674,294 680,291 681,302 674.5,303" fill="url(#ch)" stroke="none"/>
<rect x="686" y="294" width="3" height="5" fill="url(#ch)"/>
<polygon points="672.5,329 680,329 680,339 675,338" fill="url(#ch)" stroke="none"/>
<rect x="686" y="332" width="3" height="6" fill="url(#ch)"/>
<rect x="657.5" y="308.8" width="11.9" height="15" fill="url(#ch)"/>
<polygon points="767.4,284 772,284 772,375 771,376 767.4,366" fill="url(#ch)" stroke="none"/>
<rect x="772" y="309.4" width="18.6" height="12.5" fill="url(#ch)"/>
<clipPath id="dc"><circle cx="595" cy="386.9" r="19.6"/></clipPath>
<rect x="590" y="366" width="26" height="42" fill="url(#ch)" clip-path="url(#dc)"/>
<polyline points="693,236 708.5,236" fill="none" stroke="#fff" stroke-width="2" />
<rect x="692.6" y="234.6" width="16" height="3.4" fill="#fff" stroke="#fff" stroke-width="1"/>
<polyline points="694.5,238 694.5,244.5" fill="none" stroke="#fff" stroke-width="2" />
<polyline points="707,238 707,244.5" fill="none" stroke="#fff" stroke-width="2" />
<polyline points="696,240.5 699,240.5" fill="none" stroke="#fff" stroke-width="1" />
<polyline points="702,240.5 705.5,240.5" fill="none" stroke="#fff" stroke-width="1" />
<polyline points="692,245 695,244.5" fill="none" stroke="#fff" stroke-width="2" />
<polyline points="707,244.5 710,245" fill="none" stroke="#fff" stroke-width="2" />
<polyline points="672,246 692,246" fill="none" stroke="#fff" stroke-width="2" />
<polyline points="709,246 730.6,246" fill="none" stroke="#fff" stroke-width="2" />
<polyline points="672,244.8 674,243.6 678.5,243.6 680,245" fill="none" stroke="#fff" stroke-width="2" />
<rect x="680" y="250.6" width="50.6" height="4" fill="#fff" stroke="#fff" stroke-width="0"/>
<polyline points="730.6,245 730.6,254.6" fill="none" stroke="#fff" stroke-width="2" />
<polyline points="661,254 681,254" fill="none" stroke="#fff" stroke-width="2" />
<polyline points="664,258.2 681,258.2" fill="none" stroke="#fff" stroke-width="1" />
<polyline points="680.6,257.8 708.8,257.8" fill="none" stroke="#fff" stroke-width="1" />
<polyline points="671.5,246 671.5,254" fill="none" stroke="#fff" stroke-width="2" />
<polyline points="680.6,246 680.6,258" fill="none" stroke="#fff" stroke-width="2" />
<polyline points="730.6,254 775,254 780,255.9 785,260.2 787.7,265.2 786.9,269.6 783.7,271.5 780,269 777.5,265.9 775,264.6 771.9,265.2 763.8,267.8 761.3,270.2 762.5,272.2 765,272.6" fill="none" stroke="#fff" stroke-width="2" />
<polyline points="771,265.9 771,284" fill="none" stroke="#fff" stroke-width="2" />
<polyline points="661.2,253.9 653,253.9 647.5,255.8 643,260.8 639.8,266.4 640,270 642.5,271.4 646.2,270.8 648,267 651.2,265 655,265 661.2,267 664.4,268.9 665.2,271.4" fill="none" stroke="#fff" stroke-width="2" />
<polyline points="664.4,259 668.8,264 685,267.8 695,269.6 703.8,267.8 709.4,261.5 710,255.2" fill="none" stroke="#fff" stroke-width="1" />
<polyline points="655,265 655,309.75" fill="none" stroke="#fff" stroke-width="2" />
<polyline points="655,321.5 655,391" fill="none" stroke="#fff" stroke-width="2" />
<polyline points="598,348 598,282.8 616.9,282.8 646.2,280 655,279.6" fill="none" stroke="#fff" stroke-width="2" />
<polyline points="603,283 603,348" fill="none" stroke="#fff" stroke-width="2" />
<polyline points="608.5,283 608.5,348" fill="none" stroke="#fff" stroke-width="3" />
<polyline points="598,347.5 610,347.5" fill="none" stroke="#fff" stroke-width="2" />
<polyline points="598,304 595,306 593.5,309" fill="none" stroke="#fff" stroke-width="2" />
<polyline points="593.5,321 595,325 598,327" fill="none" stroke="#fff" stroke-width="2" />
<polyline points="655,295 613.8,295 612.2,301" fill="none" stroke="#fff" stroke-width="2" />
<polyline points="655,309.75 616,309.75 615.6,307.5" fill="none" stroke="#fff" stroke-width="2" />
<polyline points="655,321.5 616,321.5 615.6,324" fill="none" stroke="#fff" stroke-width="2" />
<polyline points="655,336.2 614,336.2 612,329 610.6,319 610.6,300" fill="none" stroke="#fff" stroke-width="2" />
<polyline points="568.5,308.5 592,308.5" fill="none" stroke="#fff" stroke-width="2" />
<polyline points="568.5,322 592,322" fill="none" stroke="#fff" stroke-width="2" />
<polyline points="568.5,307.5 568.5,323" fill="none" stroke="#fff" stroke-width="3" />
<polyline points="592,308 592,322.5" fill="none" stroke="#fff" stroke-width="2" />
<polyline points="610,348 610,363 612,365 615.6,365 617,357.5 620.6,355 655,380" fill="none" stroke="#fff" stroke-width="2" />
<polyline points="610,349.4 630,349.4 655,352" fill="none" stroke="#fff" stroke-width="2" />
<polyline points="628.4,349.4 628.4,358.5" fill="none" stroke="#fff" stroke-width="2" />
<polyline points="655,382 705,382" fill="none" stroke="#fff" stroke-width="2" />
<polyline points="722.5,382 771.2,382" fill="none" stroke="#fff" stroke-width="2" />
<polyline points="655,391 771.2,391" fill="none" stroke="#fff" stroke-width="2" />
<polyline points="771.2,375 771.2,391" fill="none" stroke="#fff" stroke-width="2" />
<polyline points="709.4,342.5 709.4,375 707.5,379 704,382" fill="none" stroke="#fff" stroke-width="2" />
<polyline points="717.8,342.5 717.8,375 719.5,379 723,382" fill="none" stroke="#fff" stroke-width="2" />
<circle cx="713.5" cy="315.6" r="30.8" fill="none" stroke="#fff" stroke-width="2"/>
<path d="M740.13,294.79 A33.8,33.8 0 0 0 686.87,294.79" fill="none" stroke="#fff" stroke-width="2" />
<path d="M737.88,294.41 A32.3,32.3 0 0 0 689.12,294.41" fill="none" stroke="#fff" stroke-width="1.6" stroke-dasharray="1.5 2"/>
<path d="M686.87,336.41 A33.8,33.8 0 0 0 740.13,336.41" fill="none" stroke="#fff" stroke-width="2" />
<path d="M689.12,336.79 A32.3,32.3 0 0 0 737.88,336.79" fill="none" stroke="#fff" stroke-width="1.6" stroke-dasharray="1.5 2"/>
<circle cx="713.5" cy="315.6" r="18.2" fill="none" stroke="#fff" stroke-width="2"/>
<circle cx="713.5" cy="315.6" r="24.6" fill="none" stroke="#f00" stroke-width="1"/>
<rect x="711.5" y="281.2" width="4" height="2.8" fill="#fff" stroke="#fff" stroke-width="0"/>
<circle cx="713.5" cy="341.5" r="2.4" fill="#fff" stroke="#fff" stroke-width="1.6"/>
<rect x="713" y="340.5" width="1" height="2" fill="#f00" stroke="#f00" stroke-width="0"/>
<polyline points="729.088,306.6 740.347,300.1" fill="none" stroke="#f00" stroke-width="1" />
<polyline points="733.304,300.702 736.304,305.898" fill="none" stroke="#f00" stroke-width="1" />
<polyline points="697.912,306.6 686.653,300.1" fill="none" stroke="#f00" stroke-width="1" />
<polyline points="690.696,305.898 693.696,300.702" fill="none" stroke="#f00" stroke-width="1" />
<polyline points="697.912,324.6 686.653,331.1" fill="none" stroke="#f00" stroke-width="1" />
<polyline points="693.696,330.498 690.696,325.302" fill="none" stroke="#f00" stroke-width="1" />
<polyline points="729.088,324.6 740.347,331.1" fill="none" stroke="#f00" stroke-width="1" />
<polyline points="736.304,325.302 733.304,330.498" fill="none" stroke="#f00" stroke-width="1" />
<circle cx="683" cy="288.6" r="4.6" fill="none" stroke="#fff" stroke-width="2"/>
<circle cx="744.4" cy="289" r="4.6" fill="none" stroke="#fff" stroke-width="2"/>
<polyline points="678.4,290 676,296 674,303" fill="none" stroke="#fff" stroke-width="2" />
<polyline points="687.5,291 690,297" fill="none" stroke="#fff" stroke-width="2" />
<polyline points="748.5,291 752,294 756,310" fill="none" stroke="#fff" stroke-width="2" />
<polyline points="740,291 737.5,296" fill="none" stroke="#fff" stroke-width="2" />
<rect x="678" y="331.5" width="9.5" height="9" fill="none" stroke="#fff" stroke-width="2"/>
<rect x="681" y="332" width="3.6" height="6" fill="#fff" stroke="#fff" stroke-width="0"/>
<polyline points="676,329 673,322" fill="none" stroke="#fff" stroke-width="2" />
<polyline points="689,331 692,337" fill="none" stroke="#fff" stroke-width="2" />
<polyline points="669.4,309.75 682,309.75" fill="none" stroke="#fff" stroke-width="2" />
<polyline points="669.4,321.5 682,321.5" fill="none" stroke="#fff" stroke-width="2" />
<rect x="660.6" y="309" width="4.4" height="14.6" fill="#fff" stroke="#fff" stroke-width="0"/>
<polyline points="671.2,309.75 672.5,303" fill="none" stroke="#fff" stroke-width="2" />
<polyline points="671.2,321.5 673,329" fill="none" stroke="#fff" stroke-width="2" />
<polyline points="767.5,310.6 743.8,310.6 743.8,320.6 767.5,320.6" fill="none" stroke="#fff" stroke-width="2" />
<polyline points="743.8,312.6 762,312.6" fill="none" stroke="#fff" stroke-width="1" />
<polyline points="743.8,318.6 762,318.6" fill="none" stroke="#fff" stroke-width="1" />
<polyline points="755,321 755,331 752.5,337.5 747.5,340.6 737.5,341.2 735,337.5" fill="none" stroke="#fff" stroke-width="2" />
<rect x="738.5" y="337.5" width="10.5" height="4" fill="#fff" stroke="#fff" stroke-width="0"/>
<polyline points="735,337.5 724,343 718,344" fill="none" stroke="#fff" stroke-width="2" />
<polyline points="692,337.5 703,343 709,344" fill="none" stroke="#fff" stroke-width="2" />
<polyline points="772.5,326.9 775,325.6 780,326.9 781.9,332.5 786.2,334.4 790,334.4" fill="none" stroke="#fff" stroke-width="2" />
<rect x="780.5" y="310.4" width="4.5" height="3.6" fill="#fff" stroke="#fff" stroke-width="0"/>
<circle cx="773.4" cy="355" r="2.8" fill="none" stroke="#fff" stroke-width="2"/>
<polyline points="762.5,300 763.1,318.8 765,337.5 761.2,350 762.5,362.5 768,373.8" fill="none" stroke="#fff" stroke-width="1" />
<polyline points="766.2,286.9 762.5,290.6 763.5,300" fill="none" stroke="#fff" stroke-width="1" />
<circle cx="595" cy="386.9" r="20" fill="none" stroke="#fff" stroke-width="1"/>
<polyline points="590,381.2 590,399.4" fill="none" stroke="#fff" stroke-width="2" />
<polyline points="581.2,399.4 605,399.4" fill="none" stroke="#fff" stroke-width="2" />
<polyline points="597.5,381.2 597.5,387 606,387" fill="none" stroke="#fff" stroke-width="2" />
<polyline points="598,396 598,392 606,392 606,396" fill="none" stroke="#fff" stroke-width="2" />
<polyline points="561,315.6 797,315.6" fill="none" stroke="#f00" stroke-width="1" />
<polyline points="713.5,232.8 713.5,377" fill="none" stroke="#f00" stroke-width="1" />
<polyline points="713.5,389 713.5,406" fill="none" stroke="#f00" stroke-width="1" />
<polyline points="700.4,232 700.4,262.8" fill="none" stroke="#f00" stroke-width="1" />
<polyline points="726.5,244 726.5,259.6" fill="none" stroke="#f00" stroke-width="1" />
<polyline points="593,292.5 615.6,292.5" fill="none" stroke="#f00" stroke-width="1" />
<polyline points="593,302.4 615.6,302.4" fill="none" stroke="#f00" stroke-width="1" />
<polyline points="593,329.6 615.6,329.6" fill="none" stroke="#f00" stroke-width="1" />
<polyline points="593,339.4 612.5,339.4" fill="none" stroke="#f00" stroke-width="1" />
<polyline points="683.5,284 683.5,304" fill="none" stroke="#f00" stroke-width="1" />
<polyline points="744.4,282 744.4,344.4" fill="none" stroke="#f00" stroke-width="1" />
<polyline points="662.5,301 662.5,330" fill="none" stroke="#f00" stroke-width="1" />
<polyline points="669.6,376.2 669.6,393.8" fill="none" stroke="#f00" stroke-width="1" />
<polyline points="758.5,376.2 758.5,394.4" fill="none" stroke="#f00" stroke-width="1" />
<circle cx="713.5" cy="383" r="5.2" fill="none" stroke="#f00" stroke-width="1.4"/>
<polyline points="706,383 721,383" fill="none" stroke="#f00" stroke-width="1" />
<polyline points="713.5,376 713.5,390" fill="none" stroke="#f00" stroke-width="1" />
<polyline points="760,355.3 783.8,355.3" fill="none" stroke="#f00" stroke-width="1" />
<polyline points="585,381.3 587.5,381.3" fill="none" stroke="#f00" stroke-width="1" />
<polyline points="592,381.3 597,381.3" fill="none" stroke="#f00" stroke-width="1" />
<polyline points="600,381.3 605,381.3" fill="none" stroke="#f00" stroke-width="1" />
<polyline points="781.5,293 781.5,310" fill="none" stroke="#f00" stroke-width="1" />
<polyline points="785,293 785,310" fill="none" stroke="#f00" stroke-width="1" />
<polyline points="779.5,298.5 786.5,298.5" fill="none" stroke="#f00" stroke-width="1" />
<polyline points="783.4,288 783.4,300" fill="none" stroke="#f00" stroke-width="1" />
<polyline points="780,294 786.4,294" fill="none" stroke="#f00" stroke-width="1" />
<rect x="781.5" y="300" width="3.5" height="3" fill="none" stroke="#f00" stroke-width="1"/>
<rect x="596.25" y="226.4" width="2.5" height="5" fill="none" stroke="#fff" stroke-width="1"/><polyline points="592.2,233.5 602.5,233.5" fill="none" stroke="#fff" stroke-width="1" /><polyline points="602.5,233.5 637.5,288.8" fill="none" stroke="#fff" stroke-width="1" />
<rect x="631.25" y="226.4" width="2.5" height="5" fill="none" stroke="#fff" stroke-width="1"/><polyline points="626,233.5 637.5,233.5" fill="none" stroke="#fff" stroke-width="1" /><polyline points="637.5,233.5 670.6,249.6" fill="none" stroke="#fff" stroke-width="1" />
<rect x="657.5" y="226.4" width="2.5" height="5" fill="none" stroke="#fff" stroke-width="1"/><polyline points="652.2,233.5 663.8,233.5" fill="none" stroke="#fff" stroke-width="1" /><polyline points="663.8,233.5 679.4,244.6" fill="none" stroke="#fff" stroke-width="1" />
<rect x="730.25" y="226.4" width="2.5" height="5" fill="none" stroke="#fff" stroke-width="1"/><polyline points="726.2,233.5 737,233.5" fill="none" stroke="#fff" stroke-width="1" /><polyline points="726.2,233.5 708.5,237.5" fill="none" stroke="#fff" stroke-width="1" />
<rect x="809.4" y="354.4" width="2.5" height="5" fill="none" stroke="#fff" stroke-width="1"/><polyline points="805,361.5 815.6,361.5" fill="none" stroke="#fff" stroke-width="1" /><polyline points="805,361.5 758,329.4" fill="none" stroke="#fff" stroke-width="1" />
<rect x="549.5" y="344.4" width="2.5" height="5" fill="none" stroke="#fff" stroke-width="1"/><polyline points="545,351.5 556,351.5" fill="none" stroke="#fff" stroke-width="1" /><polyline points="556,351.5 586.2,368.8" fill="none" stroke="#fff" stroke-width="1" />
<polyline points="560,308 568,308" fill="none" stroke="#0f0" stroke-width="1" />
<polyline points="560,322.5 568,322.5" fill="none" stroke="#0f0" stroke-width="1" />
<polyline points="562.5,308 562.5,322.5" fill="none" stroke="#0f0" stroke-width="1" />
<rect x="558.5" y="312.5" width="2.5" height="6" fill="none" stroke="#0f0" stroke-width="1"/>
<polyline points="568.5,322.5 568.5,409.5" fill="none" stroke="#0f0" stroke-width="1" />
<polyline points="568.5,332.8 593,332.8" fill="none" stroke="#0f0" stroke-width="1" />
<polyline points="592.6,324 592.6,334" fill="none" stroke="#0f0" stroke-width="1" />
<rect x="579.4" y="328.5" width="3.1" height="3.9" fill="none" stroke="#0f0" stroke-width="1"/>
<polyline points="568.5,408.5 790.6,408.5" fill="none" stroke="#0f0" stroke-width="1" />
<polyline points="790.6,322 790.6,410.5" fill="none" stroke="#0f0" stroke-width="1" />
<polyline points="655.5,391.5 655.5,403" fill="none" stroke="#0f0" stroke-width="1" />
<polyline points="655.5,402 771.8,402" fill="none" stroke="#0f0" stroke-width="1" />
<polyline points="771.8,391.5 771.8,403.5" fill="none" stroke="#0f0" stroke-width="1" />
<rect x="711.2" y="397.8" width="5.2" height="3.8" fill="none" stroke="#0f0" stroke-width="1"/>
<polyline points="669.6,396.4 758.6,396.4" fill="none" stroke="#0f0" stroke-width="1" />
<polyline points="669.6,394 669.6,397" fill="none" stroke="#0f0" stroke-width="1" />
<polyline points="758.6,394 758.6,397.5" fill="none" stroke="#0f0" stroke-width="1" />
<rect x="711" y="392.4" width="5.5" height="3.6" fill="none" stroke="#0f0" stroke-width="1"/>
<rect x="677" y="404.4" width="5" height="3.6" fill="none" stroke="#0f0" stroke-width="1"/>
<rect x="537" y="325.5" width="21" height="4.5" fill="none" stroke="#0f0" stroke-width="1"/>
<rect x="540" y="330.5" width="13" height="4.5" fill="none" stroke="#0f0" stroke-width="1"/>
<polyline points="558,329 596.2,342.5" fill="none" stroke="#0f0" stroke-width="1" />
<rect x="536.5" y="364" width="17.9" height="4" fill="none" stroke="#0f0" stroke-width="1"/>
<rect x="539.4" y="368.4" width="11.2" height="4.1" fill="none" stroke="#0f0" stroke-width="1"/>
<polyline points="554.4,366.9 587.5,381.2" fill="none" stroke="#0f0" stroke-width="1" />
<rect x="535.2" y="416.2" width="23.8" height="3.8" fill="none" stroke="#0f0" stroke-width="1"/>
<rect x="539.4" y="421.2" width="15" height="3.6" fill="none" stroke="#0f0" stroke-width="1"/>
<polyline points="559.4,420 605,393" fill="none" stroke="#0f0" stroke-width="1" />
<polyline points="745,289 793.8,241.5" fill="none" stroke="#0f0" stroke-width="1" />
<polyline points="745,289 793,265.9" fill="none" stroke="#0f0" stroke-width="1" />
<polyline points="793.8,237 793.8,266" fill="none" stroke="#0f0" stroke-width="1" />
<rect x="794.4" y="237" width="21.6" height="4.5" fill="none" stroke="#0f0" stroke-width="1"/>
<rect x="799.4" y="242.8" width="11.2" height="3.2" fill="none" stroke="#0f0" stroke-width="1"/>
<rect x="800.6" y="248.8" width="11.9" height="4" fill="none" stroke="#0f0" stroke-width="1"/>
<rect x="800.6" y="254" width="10.6" height="3.5" fill="none" stroke="#0f0" stroke-width="1"/>
<rect x="800.6" y="261.5" width="8.8" height="3.7" fill="none" stroke="#0f0" stroke-width="1"/>
<rect x="799.4" y="266.8" width="11.2" height="3.7" fill="none" stroke="#0f0" stroke-width="1"/>
<polyline points="793.8,253.8 800.6,253.8" fill="none" stroke="#0f0" stroke-width="1" />
<polyline points="793.8,265.9 800.6,265.9" fill="none" stroke="#0f0" stroke-width="1" />
<polyline points="783.8,302 800,292.5" fill="none" stroke="#0f0" stroke-width="1" />
<rect x="800.6" y="287.5" width="16.9" height="5" fill="none" stroke="#0f0" stroke-width="1"/>
<polyline points="800,292.5 800,316.5" fill="none" stroke="#0f0" stroke-width="1" />
<rect x="803" y="294" width="12" height="3.8" fill="none" stroke="#0f0" stroke-width="1"/>
<rect x="803" y="300.2" width="12" height="3.8" fill="none" stroke="#0f0" stroke-width="1"/>
<rect x="803" y="305.2" width="12" height="3.8" fill="none" stroke="#0f0" stroke-width="1"/>
<rect x="802" y="311.5" width="14" height="4.5" fill="none" stroke="#0f0" stroke-width="1"/>
<rect x="803.8" y="316.8" width="11.2" height="3.8" fill="none" stroke="#0f0" stroke-width="1"/>
<polyline points="800,303 803,303" fill="none" stroke="#0f0" stroke-width="1" />
<polyline points="800,314 802,314" fill="none" stroke="#0f0" stroke-width="1" />
<polygon points="995,338 1013.8,338 1013.8,332.5 1022.5,326.2 1028.8,325 1029.4,340 1031.9,340 1031.9,347.5 1030,347.5 1029.4,350.6 1000,351.9 1000,370 1007.5,372.5 1022.5,374.4 1025.6,378.8 1025.6,383.8 1023.8,385 1023,391.2 990,391.2 990,388 974.4,389.4 974.4,385 995,384.4" fill="url(#ch)" stroke="none"/>
<rect x="885.6" y="383.4" width="6.4" height="6.6" fill="url(#ch)"/>
<rect x="899.4" y="383.4" width="8.6" height="6.6" fill="url(#ch)"/>
<polyline points="1029.4,340 1031.9,340 1031.9,347.5 1030,347.5 1029.4,350.6 1000,351.9 1000,370 1007.5,372.5 1022.5,374.4 1025.6,378.8 1025.6,383.8 1023.8,385" fill="none" stroke="#fff" stroke-width="2" />
<polyline points="995,338 995,384.4" fill="none" stroke="#fff" stroke-width="2" />
<polyline points="974.4,385 995,384.4" fill="none" stroke="#fff" stroke-width="2" />
<polyline points="1005,343.2 1031,343.2" fill="none" stroke="#fff" stroke-width="1" />
<polyline points="1005,345.8 1031,345.8" fill="none" stroke="#fff" stroke-width="1" />
<polyline points="1000,382.4 1025,382.4" fill="none" stroke="#fff" stroke-width="1" />
<polyline points="1000,385 1024,385" fill="none" stroke="#fff" stroke-width="1" />
<rect x="943.2" y="233.4" width="17.4" height="3.6" fill="#fff" stroke="#fff" stroke-width="1"/>
<polyline points="945.6,237 945.6,244" fill="none" stroke="#fff" stroke-width="2" />
<polyline points="959.4,237 959.4,244" fill="none" stroke="#fff" stroke-width="2" />
<polyline points="947,240 951,240" fill="none" stroke="#fff" stroke-width="1" />
<polyline points="954,240 958,240" fill="none" stroke="#fff" stroke-width="1" />
<polyline points="943,245.2 945.6,244" fill="none" stroke="#fff" stroke-width="2" />
<polyline points="959.4,244 962,245.2" fill="none" stroke="#fff" stroke-width="2" />
<polyline points="924,245.2 945,245.2" fill="none" stroke="#fff" stroke-width="2" />
<polyline points="960,245.2 982,245.2" fill="none" stroke="#fff" stroke-width="2" />
<rect x="923" y="249" width="59" height="5" fill="#fff" stroke="#fff" stroke-width="0"/>
<polyline points="923,254 922.6,248 924.5,245.5" fill="none" stroke="#fff" stroke-width="2" />
<polyline points="982,245 982,254" fill="none" stroke="#fff" stroke-width="2" />
<polyline points="922.5,252.5 913,252.8 908,255 905.3,260 905.6,269 908.8,272.4 913,272.4 914.4,270.5 914.4,254" fill="none" stroke="#fff" stroke-width="2" />
<polyline points="905,260 905,395" fill="none" stroke="#fff" stroke-width="2" />
<polyline points="982,252.5 996.2,252.8 998.8,257.5 999.75,265 999.75,280" fill="none" stroke="#fff" stroke-width="2" />
<polyline points="989.8,254 989.8,270.5 991.2,272.4 996.5,272.6 999.2,270" fill="none" stroke="#fff" stroke-width="2" />
<polyline points="905,279 893.8,280.2 875.6,280.9 875.6,292.8 873.8,292.8 873.8,350 905,350" fill="none" stroke="#fff" stroke-width="2" />
<polyline points="882,281 882,350" fill="none" stroke="#fff" stroke-width="2" />
<polyline points="843,306.2 870.6,306.2" fill="none" stroke="#fff" stroke-width="2" />
<polyline points="843,324.4 870.6,324.4" fill="none" stroke="#fff" stroke-width="2" />
<polyline points="843.2,305.4 843.2,325.4" fill="none" stroke="#fff" stroke-width="2.4" />
<polyline points="870.6,306 870.6,324.6" fill="none" stroke="#fff" stroke-width="2" />
<polyline points="870.6,303 873.8,303" fill="none" stroke="#fff" stroke-width="2" />
<polyline points="870.6,328 873.8,328" fill="none" stroke="#fff" stroke-width="2" />
<polyline points="904.4,293.8 890.6,293.8 889.4,298.8 887.5,307.5 887.5,322.5 889.4,330 890,337 904.4,337" fill="none" stroke="#fff" stroke-width="2" />
<polyline points="928.8,293.8 915,293.8 913.8,298.8 911.9,307.5 911.2,311.2 911.2,320 913.1,328.8 914.4,337.5 928.8,337.5" fill="none" stroke="#fff" stroke-width="2" />
<polyline points="887.5,309.75 911.2,309.75" fill="none" stroke="#fff" stroke-width="2" />
<polyline points="887.5,320 911.2,320" fill="none" stroke="#fff" stroke-width="2" />
<polyline points="975.6,293.8 990.6,293.8 991.9,298.8 993.1,307.5 993.8,311.2 993.8,320 992,328.8 990.6,337.5 976.2,337.5" fill="none" stroke="#fff" stroke-width="2" />
<polyline points="993.8,309.75 1017.5,309.75" fill="none" stroke="#fff" stroke-width="2" />
<polyline points="993.8,320 1017.5,320" fill="none" stroke="#fff" stroke-width="2" />
<polyline points="1000,293.8 1012.5,293.8 1016.2,301.2 1017.5,310" fill="none" stroke="#fff" stroke-width="2" />
<polyline points="999.75,280 999.75,327" fill="none" stroke="#fff" stroke-width="2" />
<polyline points="999.75,279 1012,279.6 1029.4,280.5 1029.4,326" fill="none" stroke="#fff" stroke-width="2" />
<polyline points="1021.9,280.5 1021.9,326" fill="none" stroke="#fff" stroke-width="2" />
<polyline points="1003.1,292 1003.8,287.8 1008.1,284 1012.5,287.8 1013.1,292" fill="none" stroke="#fff" stroke-width="2" />
<rect x="1005.6" y="288.5" width="1.4" height="3" fill="none" stroke="#fff" stroke-width="1"/>
<rect x="1010" y="288.5" width="1.4" height="3" fill="none" stroke="#fff" stroke-width="1"/>
<polyline points="1000,294.6 1015,294.6" fill="none" stroke="#fff" stroke-width="2" />
<polyline points="1013.8,294 1015.6,301.5 1016.2,310" fill="none" stroke="#fff" stroke-width="2" />
<circle cx="952.5" cy="315.6" r="30" fill="none" stroke="#fff" stroke-width="2"/>
<path d="M977.17,293.38 A33.2,33.2 0 0 0 927.83,293.38" fill="none" stroke="#fff" stroke-width="2"/>
<path d="M927.83,337.82 A33.2,33.2 0 0 0 977.17,337.82" fill="none" stroke="#fff" stroke-width="2"/>
<circle cx="952.5" cy="315.6" r="25" fill="none" stroke="#f00" stroke-width="1"/>
<circle cx="952.5" cy="315.6" r="11" fill="none" stroke="#fff" stroke-width="1.6"/>
<circle cx="952.5" cy="315.6" r="7.8" fill="none" stroke="#fff" stroke-width="2.4"/>
<rect x="950.5" y="281.6" width="4" height="2.4" fill="#fff" stroke="#fff" stroke-width="0"/>
<polyline points="969.702,303.555 976.255,298.966" fill="none" stroke="#f00" stroke-width="1" />
<polyline points="970.971,298.394 974.986,304.128" fill="none" stroke="#f00" stroke-width="1" />
<polyline points="935.298,303.555 928.745,298.966" fill="none" stroke="#f00" stroke-width="1" />
<polyline points="930.014,304.128 934.029,298.394" fill="none" stroke="#f00" stroke-width="1" />
<polyline points="935.298,327.645 928.745,332.234" fill="none" stroke="#f00" stroke-width="1" />
<polyline points="934.029,332.806 930.014,327.072" fill="none" stroke="#f00" stroke-width="1" />
<polyline points="969.702,327.645 976.255,332.234" fill="none" stroke="#f00" stroke-width="1" />
<polyline points="974.986,327.072 970.971,332.806" fill="none" stroke="#f00" stroke-width="1" />
<circle cx="952.2" cy="340" r="3.2" fill="none" stroke="#fff" stroke-width="2"/>
<rect x="951.6" y="339.4" width="1.4" height="1.4" fill="#f00" stroke="#f00" stroke-width="0"/>
<polyline points="948.8,344 948.8,363.8 949.6,366 949.6,381 948,383" fill="none" stroke="#fff" stroke-width="2" />
<polyline points="956.6,344 956.6,363.8 955.8,366 955.8,381 957.4,383" fill="none" stroke="#fff" stroke-width="2" />
<polyline points="955,366 955,372" fill="none" stroke="#fff" stroke-width="1" />
<polyline points="885.6,350 885.6,383.8" fill="none" stroke="#fff" stroke-width="2" />
<polyline points="884.4,390.6 917.5,390.6 917.5,388.6 974.4,388.6" fill="none" stroke="#fff" stroke-width="2" />
<rect x="891.9" y="384" width="7.5" height="6" fill="#000" stroke="#fff" stroke-width="1"/>
<polyline points="885,383.4 908,383.4" fill="none" stroke="#fff" stroke-width="2" />
<polyline points="908,383.5 910,380.5 911.5,380" fill="none" stroke="#fff" stroke-width="1" />
<polyline points="960,388.8 974,388.8" fill="none" stroke="#fff" stroke-width="1" />
<rect x="997.5" y="328.8" width="11.9" height="8.2" fill="none" stroke="#fff" stroke-width="1.6"/>
<polyline points="997.5,328.8 1009.4,337" fill="none" stroke="#fff" stroke-width="1" />
<polyline points="997.5,337 1009.4,328.8" fill="none" stroke="#fff" stroke-width="1" />
<rect x="1009.4" y="330" width="4.4" height="7" fill="none" stroke="#fff" stroke-width="1.6"/>
<polyline points="1020,351.5 1020,374" fill="none" stroke="#fff" stroke-width="2" />
<polyline points="991.9,330 988,334 985,340 983.8,355 979.4,368.8 975.6,383.8" fill="none" stroke="#fff" stroke-width="1" />
<polyline points="980.6,362.6 995,362.6" fill="none" stroke="#fff" stroke-width="1" />
<polyline points="973.8,336.9 986.2,336.9" fill="none" stroke="#fff" stroke-width="1" />
<polyline points="1013.8,310 1016.2,318 1017,326" fill="none" stroke="#fff" stroke-width="1" />
<polyline points="952.5,227 952.5,412" fill="none" stroke="#f00" stroke-width="1" />
<polyline points="843,315.6 1037.5,315.6" fill="none" stroke="#f00" stroke-width="1" />
<polyline points="926.2,243.4 926.2,257.8" fill="none" stroke="#f00" stroke-width="1" />
<polyline points="978.5,243.4 978.5,259" fill="none" stroke="#f00" stroke-width="1" />
<polyline points="921.5,282.5 921.5,350" fill="none" stroke="#f00" stroke-width="1" />
<polyline points="983.5,282.5 983.5,350" fill="none" stroke="#f00" stroke-width="1" />
<polyline points="1008.5,282 1008.5,326" fill="none" stroke="#f00" stroke-width="1" />
<polyline points="1004.4,305 1004.4,326" fill="none" stroke="#f00" stroke-width="1" />
<polyline points="896.5,375 896.5,405" fill="none" stroke="#f00" stroke-width="1" />
<polyline points="986.9,344.5 1045,344.5" fill="none" stroke="#f00" stroke-width="1" stroke-dasharray="9 2 2 2"/>
<polyline points="986.9,383.6 1028,383.6" fill="none" stroke="#f00" stroke-width="1" stroke-dasharray="14 3"/>
<polyline points="960.6,234.6 1062.8,234.6" fill="none" stroke="#0f0" stroke-width="1" />
<polyline points="1060.6,234.6 1060.6,391.2" fill="none" stroke="#0f0" stroke-width="1" />
<rect x="1056.2" y="310.6" width="4.4" height="5" fill="none" stroke="#0f0" stroke-width="1"/>
<polyline points="1038,315.6 1048.8,315.6" fill="none" stroke="#0f0" stroke-width="1" />
<polyline points="1046.2,315.6 1046.2,391.2" fill="none" stroke="#0f0" stroke-width="1" />
<rect x="1042.2" y="351.2" width="3.4" height="4.4" fill="none" stroke="#0f0" stroke-width="1"/>
<polyline points="1023,391.2 1062.5,391.2" fill="none" stroke="#0f0" stroke-width="1" />
<polyline points="1031.6,347.5 1031.6,421.5" fill="none" stroke="#0f0" stroke-width="1" />
<polyline points="1023.6,391.2 1023.6,413" fill="none" stroke="#0f0" stroke-width="1" />
<polyline points="843.5,324.5 843.5,421.5" fill="none" stroke="#0f0" stroke-width="1" />
<polyline points="843.5,335.6 870.6,335.6" fill="none" stroke="#0f0" stroke-width="1" />
<polyline points="870.6,330 870.6,337.5" fill="none" stroke="#0f0" stroke-width="1" />
<rect x="855.6" y="331.2" width="3.4" height="4" fill="none" stroke="#0f0" stroke-width="1"/>
<polyline points="843.5,420.4 1031.6,420.4" fill="none" stroke="#0f0" stroke-width="1" />
<rect x="895.2" y="416.6" width="5.1" height="3.4" fill="none" stroke="#0f0" stroke-width="1"/>
<rect x="989.4" y="416.6" width="5.2" height="3.4" fill="none" stroke="#0f0" stroke-width="1"/>
<polyline points="885.5,391 885.5,413.5" fill="none" stroke="#0f0" stroke-width="1" />
<polyline points="885.5,411.6 1023.6,411.6" fill="none" stroke="#0f0" stroke-width="1" />
<rect x="952.5" y="407.2" width="4.1" height="4" fill="none" stroke="#0f0" stroke-width="1"/>
<polyline points="952.5,404 952.5,422" fill="none" stroke="#0f0" stroke-width="1" />
<polyline points="896.5,404.5 953.8,404.5" fill="none" stroke="#0f0" stroke-width="1" />
<rect x="922.8" y="400.4" width="4.8" height="3.8" fill="none" stroke="#0f0" stroke-width="1"/>
<polyline points="885.5,397.9 908,397.9" fill="none" stroke="#0f0" stroke-width="1" />
<polyline points="891.2,391 891.2,399.4" fill="none" stroke="#0f0" stroke-width="1" />
<polyline points="900.6,391 900.6,399.4" fill="none" stroke="#0f0" stroke-width="1" />
<rect x="893.8" y="393.5" width="5" height="4" fill="none" stroke="#0f0" stroke-width="1"/>
<rect x="825.6" y="263.4" width="10" height="3.6" fill="none" stroke="#0f0" stroke-width="1"/>
<rect x="823" y="267.8" width="15" height="3.7" fill="none" stroke="#0f0" stroke-width="1"/>
<polyline points="838.8,267.8 853,306" fill="none" stroke="#0f0" stroke-width="1" />
<polyline points="832.5,303 843,303" fill="none" stroke="#0f0" stroke-width="1" />
<polyline points="834.4,303 834.4,328" fill="none" stroke="#0f0" stroke-width="1" />
<polyline points="832.5,327.5 843,327.5" fill="none" stroke="#0f0" stroke-width="1" />
<rect x="831.5" y="311" width="2.5" height="9" fill="none" stroke="#0f0" stroke-width="1"/>
<polygon points="679.4,448 700,445.5 704.4,447.5 704.4,454.4 698.8,455 697,468 690,470 690,455 679.4,455" fill="url(#ch)" stroke="none"/>
<polygon points="723.8,447.5 748.8,447.5 748.8,454.4 737,455 736.9,468 731.5,466 729.5,455 723.8,454.4" fill="url(#ch)" stroke="none"/>
<polygon points="690,470 704,470 704,480 690,480" fill="url(#ch)" stroke="none"/>
<rect x="598" y="488.6" width="11.2" height="23.8" fill="url(#ch)"/>
<rect x="609.2" y="498.6" width="49.6" height="5" fill="url(#ch)"/>
<polygon points="651,503.6 658.8,503.6 658.8,512 654,512 650,507.5" fill="url(#ch)" stroke="none"/>
<rect x="660.7" y="500" width="19.9" height="13.6" fill="url(#ch)"/>
<polygon points="657.9,529.4 678.6,529.4 678.6,542.5 668,545 657.9,540" fill="url(#ch)" stroke="none"/>
<polygon points="668.3,542 700,542 700,578 692,572 692,559.6 668,559.6" fill="url(#ch)" stroke="none"/>
<polygon points="680,541.5 702.3,541.5 702.3,571 697,572 692.2,566 692.2,558.4 680,558.4" fill="url(#ch)" stroke="none"/>
<polygon points="725.5,541.5 747,541.5 762.5,543.5 761.2,559.8 735.5,559.8 735.5,572 725.5,572" fill="url(#ch)" stroke="none"/>
<polygon points="724.4,572 729.7,572 735.5,586.7 735.5,602 729.7,602 729.7,586.7 724.4,583" fill="url(#ch)" stroke="none"/>
<rect x="714" y="602" width="34" height="5.8" fill="url(#ch)"/>
<polyline points="704.4,440 704.4,413 706,411.4 721.5,411.4 723,413 723,440" fill="none" stroke="#fff" stroke-width="2" />
<polyline points="710.6,438 710.6,415.5 716.9,415.5 716.9,438 710.6,438" fill="none" stroke="#fff" stroke-width="2" />
<polyline points="703,470 703,440 723.8,440 723.8,470" fill="none" stroke="#fff" stroke-width="2" />
<polyline points="703,469.8 723.8,469.8" fill="none" stroke="#fff" stroke-width="2" />
<polyline points="678.8,455.6 678.8,448 700,445.2 703,447" fill="none" stroke="#fff" stroke-width="2" />
<polyline points="723.8,447.2 748.8,447.2" fill="none" stroke="#fff" stroke-width="2" />
<polyline points="704.4,454.6 679,454.6" fill="none" stroke="#fff" stroke-width="2" />
<polyline points="723.8,454.6 770,454.6 772.5,456.9 780,457.5 786.2,462.5 790.6,468.8 790.6,588" fill="none" stroke="#fff" stroke-width="2" />
<polyline points="747.5,457 768,457" fill="none" stroke="#fff" stroke-width="2" />
<polyline points="610,488 615,483 655,465.6 655,462 659.4,456.2 678.8,455.6" fill="none" stroke="#fff" stroke-width="2" />
<polyline points="655,466.8 678.8,457.4" fill="none" stroke="#fff" stroke-width="2" />
<polyline points="689.4,455 689.4,480" fill="none" stroke="#fff" stroke-width="2" />
<polyline points="670.6,480 766.2,480.6" fill="none" stroke="#fff" stroke-width="2" />
<polyline points="670.6,480 657.5,496.2 657.5,498.6" fill="none" stroke="#fff" stroke-width="2" />
<polyline points="647.5,480.6 665.6,480.6 665.6,482.5 656.2,495 655,498.6" fill="none" stroke="#fff" stroke-width="2" />
<polyline points="647.5,480.6 645.6,486 646.2,493 626.2,493.8 626.2,498.6" fill="none" stroke="#fff" stroke-width="2" />
<polyline points="597.6,488.4 609.4,488.4" fill="none" stroke="#fff" stroke-width="2" />
<polyline points="597.6,488.4 597.6,504" fill="none" stroke="#fff" stroke-width="2" />
<polyline points="609.4,488.4 609.4,498.6" fill="none" stroke="#fff" stroke-width="2" />
<polyline points="609.4,498.4 658.8,498.4" fill="none" stroke="#fff" stroke-width="2" />
<polyline points="609.4,503.8 651,503.8" fill="none" stroke="#fff" stroke-width="1" />
<rect x="627.2" y="494.4" width="10.4" height="4" fill="none" stroke="#fff" stroke-width="1.6"/>
<rect x="627.7" y="503.8" width="9.4" height="5.2" fill="none" stroke="#fff" stroke-width="1.6"/>
<rect x="639" y="503.8" width="5.7" height="5.2" fill="none" stroke="#fff" stroke-width="1.6"/>
<rect x="613" y="504" width="6.5" height="6.5" fill="none" stroke="#fff" stroke-width="1.6"/>
<polyline points="625.8,511.4 644.7,511.4" fill="none" stroke="#fff" stroke-width="2" />
<polyline points="625.8,511.4 625.8,530" fill="none" stroke="#fff" stroke-width="2" />
<polyline points="644.7,505 644.7,531" fill="none" stroke="#fff" stroke-width="2" />
<polyline points="660.7,500 660.7,513.6 680.8,513.6 680.8,499 676,496.2 668,494.6 666,497.5 660.7,500" fill="none" stroke="#fff" stroke-width="2" />
<polyline points="654,514 681.5,514" fill="none" stroke="#fff" stroke-width="2" />
<polyline points="654,529.4 681.5,529.4" fill="none" stroke="#fff" stroke-width="2" />
<polyline points="654,514 654,529.4" fill="none" stroke="#fff" stroke-width="2" />
<polyline points="681.5,511 681.5,532" fill="none" stroke="#fff" stroke-width="2" />
<polygon points="662.5,519.2 675,519.2 677,522.4 675,525.6 662.5,525.6 660.4,522.4" fill="none" stroke="#fff" stroke-width="1.6" />
<polyline points="657.9,529.4 657.9,540" fill="none" stroke="#fff" stroke-width="2" />
<polyline points="678.8,529.4 678.8,542" fill="none" stroke="#fff" stroke-width="2" />
<polyline points="681.5,541.5 700,541.5" fill="none" stroke="#fff" stroke-width="2" />
<polyline points="560.5,515.6 591,515.6" fill="none" stroke="#fff" stroke-width="2" />
<polyline points="560.5,528.4 591,528.4" fill="none" stroke="#fff" stroke-width="2" />
<polyline points="570,518.6 591,518.6" fill="none" stroke="#fff" stroke-width="1" />
<polyline points="570,525.2 591,525.2" fill="none" stroke="#fff" stroke-width="1" />
<polyline points="569,515.6 569,528.4" fill="none" stroke="#fff" stroke-width="2" />
<polyline points="591,513 591,529.6" fill="none" stroke="#fff" stroke-width="2" />
<polyline points="591,513.4 612.5,513.4" fill="none" stroke="#fff" stroke-width="2" />
<polyline points="591,529.4 612.5,529.4" fill="none" stroke="#fff" stroke-width="2" />
<polyline points="612.5,511 612.5,532" fill="none" stroke="#fff" stroke-width="2" />
<polyline points="596.9,529.4 596.9,556" fill="none" stroke="#fff" stroke-width="3.4" />
<polyline points="602,527 602,556" fill="none" stroke="#fff" stroke-width="2" />
<polyline points="608.4,527 608.4,556" fill="none" stroke="#fff" stroke-width="2" />
<polyline points="594,556 610,556" fill="none" stroke="#fff" stroke-width="2" />
<polyline points="594,503 597.6,503" fill="none" stroke="#fff" stroke-width="2" />
<polyline points="594,503 593.5,512.5" fill="none" stroke="#fff" stroke-width="2" />
<polyline points="593.5,530 594,540" fill="none" stroke="#fff" stroke-width="2" />
<polyline points="609.4,548 656.2,548" fill="none" stroke="#fff" stroke-width="2" />
<polyline points="610,555 613.8,559.4 621.2,561.9 655,580 665,590" fill="none" stroke="#fff" stroke-width="2" />
<polyline points="621.2,559.6 661,559.6" fill="none" stroke="#fff" stroke-width="2" />
<polyline points="644,560 643,566 645,569 656,569" fill="none" stroke="#fff" stroke-width="2" />
<rect x="645" y="532.5" width="8.5" height="7" fill="none" stroke="#fff" stroke-width="1.4"/>
<polyline points="645,532.5 653.5,539.5" fill="none" stroke="#fff" stroke-width="1" />
<polyline points="645,539.5 653.5,532.5" fill="none" stroke="#fff" stroke-width="1" />
<polyline points="612.5,529.4 628,531 634,535 641,541 646,547" fill="none" stroke="#fff" stroke-width="1" />
<polyline points="657.5,548.5 665,556 667.5,563 681,565.5 690,571.5 697,578" fill="none" stroke="#fff" stroke-width="1" />
<polyline points="680,541.4 747.5,541.4 762.5,543.6 761.2,560 735.6,560" fill="none" stroke="#fff" stroke-width="2" />
<polyline points="680,558.6 692.2,558.6" fill="none" stroke="#fff" stroke-width="2" />
<polyline points="702.5,570 725.5,570" fill="none" stroke="#fff" stroke-width="2" />
<polygon points="710.7,548 712,546.4 715,546.4 716.3,548 716.3,567.6 710.7,567.6" fill="none" stroke="#fff" stroke-width="1.6" />
<polyline points="692.2,558.6 692.2,566 697,572" fill="none" stroke="#fff" stroke-width="2" />
<polyline points="726.9,480.6 726.9,541.4" fill="none" stroke="#fff" stroke-width="2" />
<polyline points="766.2,480.6 766.2,574.4 736.5,574.4" fill="none" stroke="#fff" stroke-width="2" />
<polyline points="737.5,460.6 738,471 741.2,475 772.5,474.4 775.6,477.5 775.6,575 772.5,579.5 768,580.6 742.5,580.6 739.5,585" fill="none" stroke="#fff" stroke-width="2" />
<polyline points="738.8,477.2 767.5,477.5 771.9,480.5 771.9,573 769,577 765,577.6 740,577.6 737.5,581" fill="none" stroke="#fff" stroke-width="2" />
<polyline points="736.9,455 736.9,480.6" fill="none" stroke="#fff" stroke-width="2" />
<rect x="725.6" y="470.6" width="9.4" height="8.8" fill="none" stroke="#fff" stroke-width="1.4"/>
<polyline points="725.6,470.6 735,479.4" fill="none" stroke="#fff" stroke-width="1" />
<polyline points="725.6,479.4 735,470.6" fill="none" stroke="#fff" stroke-width="1" />
<polyline points="790.6,588 787.5,593.8 781.2,598 774.4,598.6 747.5,598.6" fill="none" stroke="#fff" stroke-width="2" />
<polyline points="749.4,601.4 774.4,601.4 781,599" fill="none" stroke="#fff" stroke-width="2" />
<rect x="678.8" y="603.6" width="35.2" height="3.6" fill="#fff" stroke="#fff" stroke-width="0"/>
<polyline points="714,602 748.5,602" fill="none" stroke="#fff" stroke-width="2" />
<polyline points="714,607.8 748.5,607.8" fill="none" stroke="#fff" stroke-width="2" />
<polyline points="655,582.5 657.5,593.8 666.2,601.2 678.8,602.6" fill="none" stroke="#fff" stroke-width="2" />
<polyline points="650,570 652,578 658,586 668,590 680,592 690,588" fill="none" stroke="#fff" stroke-width="2" />
<polyline points="660,570 663,580 669,584.5 677,586" fill="none" stroke="#fff" stroke-width="2" />
<rect x="712.8" y="584" width="14.8" height="5.8" fill="#fff" stroke="#fff" stroke-width="0"/>
<polyline points="713.5,589 713.5,603" fill="none" stroke="#fff" stroke-width="2" />
<polyline points="727,589 725,598 714,601" fill="none" stroke="#fff" stroke-width="2" />
<rect x="711" y="606" width="5" height="3.5" fill="#fff" stroke="#fff" stroke-width="0"/>
<polyline points="686,574 690,583 694,596 697,603" fill="none" stroke="#fff" stroke-width="2" />
<polyline points="692,572 697,584 700,596" fill="none" stroke="#fff" stroke-width="2" />
<polyline points="736,586 741,586 741,592 736.5,592" fill="none" stroke="#fff" stroke-width="2" />
<polyline points="563.8,522.4 798,522.4" fill="none" stroke="#f00" stroke-width="1" />
<polyline points="713.5,406 713.5,620.6" fill="none" stroke="#f00" stroke-width="1" />
<polyline points="613,489.5 658.8,489.5" fill="none" stroke="#f00" stroke-width="1" />
<polyline points="657,469.4 687.5,469.4" fill="none" stroke="#f00" stroke-width="1" />
<polyline points="668.8,458 668.8,474.4" fill="none" stroke="#f00" stroke-width="1" />
<polyline points="661.2,465.6 661.2,473" fill="none" stroke="#f00" stroke-width="1" />
<polyline points="613,554.4 653,554.4" fill="none" stroke="#f00" stroke-width="1" />
<rect x="619.4" y="553.4" width="1.4" height="1.4" fill="#f00" stroke="#f00" stroke-width="0"/>
<rect x="642.4" y="553.4" width="1.4" height="1.4" fill="#f00" stroke="#f00" stroke-width="0"/>
<polyline points="592,508.5 598.8,508.5" fill="none" stroke="#f00" stroke-width="1" />
<polyline points="592,535.4 600,535.4" fill="none" stroke="#f00" stroke-width="1" />
<polyline points="681.5,501.5 686.5,501.5" fill="none" stroke="#f00" stroke-width="1" />
<polyline points="676,517.5 685,517.5" fill="none" stroke="#f00" stroke-width="1" />
<polyline points="676,527.5 685,527.5" fill="none" stroke="#f00" stroke-width="1" />
<polyline points="660,496.5 664,497.5" fill="none" stroke="#f00" stroke-width="1" />
<polyline points="667,498 679,501.5" fill="none" stroke="#f00" stroke-width="1" />
<polyline points="656.2,575.2 668.8,575.2" fill="none" stroke="#f00" stroke-width="1" />
<polyline points="662.6,569.4 662.6,582.5" fill="none" stroke="#f00" stroke-width="1" />
<circle cx="663" cy="575.2" r="1.6" fill="#0ff" stroke="#0ff" stroke-width="1"/>
<polyline points="652,587.5 690,587.5" fill="none" stroke="#f00" stroke-width="1" />
<polyline points="669.4,572 669.4,601" fill="none" stroke="#f00" stroke-width="1" />
<polyline points="683.5,578 683.5,600" fill="none" stroke="#f00" stroke-width="1" />
<polyline points="682,542.6 691,542.6" fill="none" stroke="#f00" stroke-width="1" />
<polyline points="741,542.6 745,542.6" fill="none" stroke="#f00" stroke-width="1" />
<polyline points="747.5,544.5 765,547.5" fill="none" stroke="#f00" stroke-width="1" />
<polyline points="681.5,517.5 686.5,517.5" fill="none" stroke="#f00" stroke-width="1" />
<polyline points="681,576.5 687,576.5" fill="none" stroke="#f00" stroke-width="1" />
<polyline points="681,592.5 685,592.5" fill="none" stroke="#f00" stroke-width="1" />
<polyline points="668,540.6 679,539" fill="none" stroke="#f0f" stroke-width="1" stroke-dasharray="2 1.5"/>
<polyline points="667,544.6 680,543" fill="none" stroke="#f00" stroke-width="1" />
<polyline points="731,583 733.5,577" fill="none" stroke="#f00" stroke-width="1" />
<polyline points="613.9,489.4 627.3,489.4" fill="none" stroke="#f00" stroke-width="1" /><polyline points="620.6,482.7 620.6,496.1" fill="none" stroke="#f00" stroke-width="1" /><polygon points="616.4,489.4 620.6,485.2 624.8000000000001,489.4 620.6,493.59999999999997" fill="#0ff"/><path d="M619.1,490.9 l3,-3" stroke="#000" stroke-width="1"/><rect x="620.1" y="488.9" width="1" height="1" fill="#f00"/>
<polyline points="636.9,489.4 650.3,489.4" fill="none" stroke="#f00" stroke-width="1" /><polyline points="643.6,482.7 643.6,496.1" fill="none" stroke="#f00" stroke-width="1" /><polygon points="639.4,489.4 643.6,485.2 647.8000000000001,489.4 643.6,493.59999999999997" fill="#0ff"/><path d="M642.1,490.9 l3,-3" stroke="#000" stroke-width="1"/><rect x="643.1" y="488.9" width="1" height="1" fill="#f00"/>
<polyline points="675.8,469.4 689.2,469.4" fill="none" stroke="#f00" stroke-width="1" /><polyline points="682.5,462.7 682.5,476.1" fill="none" stroke="#f00" stroke-width="1" /><polygon points="678.3,469.4 682.5,465.2 686.7,469.4 682.5,473.59999999999997" fill="#0ff"/><path d="M681.0,470.9 l3,-3" stroke="#000" stroke-width="1"/><rect x="682.0" y="468.9" width="1" height="1" fill="#f00"/>
<polyline points="738.9,469.4 752.3,469.4" fill="none" stroke="#f00" stroke-width="1" /><polyline points="745.6,462.7 745.6,476.1" fill="none" stroke="#f00" stroke-width="1" /><polygon points="741.4,469.4 745.6,465.2 749.8000000000001,469.4 745.6,473.59999999999997" fill="#0ff"/><path d="M744.1,470.9 l3,-3" stroke="#000" stroke-width="1"/><rect x="745.1" y="468.9" width="1" height="1" fill="#f00"/>
<polyline points="737.8,587.5 751.2,587.5" fill="none" stroke="#f00" stroke-width="1" /><polyline points="744.5,580.8 744.5,594.2" fill="none" stroke="#f00" stroke-width="1" /><polygon points="740.3,587.5 744.5,583.3 748.7,587.5 744.5,591.7" fill="#0ff"/><path d="M743.0,589.0 l3,-3" stroke="#000" stroke-width="1"/><rect x="744.0" y="587.0" width="1" height="1" fill="#f00"/>
<polyline points="762.1,469.4 770.3,469.4" fill="none" stroke="#f00" stroke-width="1" /><polyline points="766.2,465.3 766.2,473.5" fill="none" stroke="#f00" stroke-width="1" /><polygon points="764.6,469.4 766.2,467.79999999999995 767.8000000000001,469.4 766.2,471.0" fill="#0ff"/><path d="M764.7,470.9 l3,-3" stroke="#000" stroke-width="1"/><rect x="765.7" y="468.9" width="1" height="1" fill="#f00"/>
<rect x="549.6" y="430.3" width="4" height="6.4" fill="none" stroke="#fff" stroke-width="1"/><polyline points="545,437.5 555.6,437.5" fill="none" stroke="#fff" stroke-width="1" /><polyline points="555.6,437.5 597.5,488.8" fill="none" stroke="#fff" stroke-width="1" />
<rect x="576.4" y="430.3" width="4" height="6.4" fill="none" stroke="#fff" stroke-width="1"/><polyline points="572.2,437.5 583.8,437.5" fill="none" stroke="#fff" stroke-width="1" /><polyline points="583.8,437.5 602.5,488" fill="none" stroke="#fff" stroke-width="1" />
<rect x="600.4" y="430.3" width="4" height="6.4" fill="none" stroke="#fff" stroke-width="1"/><polyline points="596,437.5 607.5,437.5" fill="none" stroke="#fff" stroke-width="1" /><polyline points="607.5,437.5 700,446.9" fill="none" stroke="#fff" stroke-width="1" />
<rect x="656.4" y="430.3" width="4" height="6.4" fill="none" stroke="#fff" stroke-width="1"/><polyline points="651.9,437.5 662.5,437.5" fill="none" stroke="#fff" stroke-width="1" /><polyline points="662.5,437.5 700,443" fill="none" stroke="#fff" stroke-width="1" />
<rect x="771.4" y="430.3" width="4" height="6.4" fill="none" stroke="#fff" stroke-width="1"/><polyline points="767.5,437.5 778,437.5" fill="none" stroke="#fff" stroke-width="1" /><polyline points="767.5,437.5 748.8,447.5" fill="none" stroke="#fff" stroke-width="1" />
<rect x="801.4" y="430.3" width="4" height="6.4" fill="none" stroke="#fff" stroke-width="1"/><polyline points="796.2,437.5 807.5,437.5" fill="none" stroke="#fff" stroke-width="1" /><polyline points="796.2,437.5 751.2,452.5" fill="none" stroke="#fff" stroke-width="1" />
<rect x="557.4" y="544.4" width="4" height="5" fill="none" stroke="#fff" stroke-width="1"/><polyline points="554,551.5 565,551.5" fill="none" stroke="#fff" stroke-width="1" /><polyline points="565,551.5 600.6,518" fill="none" stroke="#fff" stroke-width="1" />
<rect x="557.4" y="615.4" width="4" height="5.2" fill="none" stroke="#fff" stroke-width="1"/><polyline points="554,622.5 565,622.5" fill="none" stroke="#fff" stroke-width="1" /><polyline points="565,622.5 600,555" fill="none" stroke="#fff" stroke-width="1" />
<rect x="583.2" y="615.4" width="4" height="5.2" fill="none" stroke="#fff" stroke-width="1"/><polyline points="579,622.5 590,622.5" fill="none" stroke="#fff" stroke-width="1" /><polyline points="590,622.5 635,562.5" fill="none" stroke="#fff" stroke-width="1" />
<rect x="627" y="615.4" width="3.6" height="5.2" fill="none" stroke="#fff" stroke-width="1"/><polyline points="623,622.5 633.8,622.5" fill="none" stroke="#fff" stroke-width="1" /><polyline points="633.8,622.5 662,560" fill="none" stroke="#fff" stroke-width="1" />
<rect x="641" y="615.4" width="2.6" height="5.2" fill="none" stroke="#fff" stroke-width="1"/><polyline points="637.2,622.5 647.5,622.5" fill="none" stroke="#fff" stroke-width="1" /><polyline points="647.5,622.5 658,598.8" fill="none" stroke="#fff" stroke-width="1" />
<polyline points="681.2,622.5 692,622.5" fill="none" stroke="#fff" stroke-width="1" />
<polyline points="687,615.4 687,620.6" fill="none" stroke="#fff" stroke-width="2" />
<polyline points="692,622.5 696.2,606" fill="none" stroke="#fff" stroke-width="1" />
<polyline points="752.5,622.5 763,622.5" fill="none" stroke="#fff" stroke-width="1" />
<polyline points="758,615.4 758,620.6" fill="none" stroke="#fff" stroke-width="2" />
<polyline points="752.5,622.5 745,607.5" fill="none" stroke="#fff" stroke-width="1" />
<polyline points="705.6,413 705.6,430" fill="none" stroke="#0f0" stroke-width="1" />
<polyline points="722.5,413 722.5,430" fill="none" stroke="#0f0" stroke-width="1" />
<polyline points="705.6,429.4 722.5,429.4" fill="none" stroke="#0f0" stroke-width="1" />
<rect x="710.8" y="424.4" width="5.6" height="4.4" fill="none" stroke="#0f0" stroke-width="1"/>
<rect x="737.2" y="424.4" width="24.8" height="4.4" fill="none" stroke="#0f0" stroke-width="1"/>
<rect x="742.2" y="429.4" width="15.3" height="4.4" fill="none" stroke="#0f0" stroke-width="1"/>
<polyline points="737.2,428.8 726.2,450" fill="none" stroke="#0f0" stroke-width="1" />
<polyline points="705,447.5 726.2,447.5" fill="none" stroke="#0ff" stroke-width="1" />
<polyline points="690,454.4 690,460" fill="none" stroke="#0f0" stroke-width="1" />
<polyline points="736.9,454.4 736.9,460" fill="none" stroke="#0f0" stroke-width="1" />
<polyline points="690,458.5 736.9,458.5" fill="none" stroke="#0f0" stroke-width="1" />
<rect x="710.2" y="452.5" width="7.3" height="5.5" fill="none" stroke="#0f0" stroke-width="1"/>
<rect x="810" y="447.2" width="12" height="7.6" fill="none" stroke="#0f0" stroke-width="1"/>
<polyline points="810,451 822,451" fill="none" stroke="#0f0" stroke-width="1" />
<polyline points="810,451.2 767.5,469.4" fill="none" stroke="#0f0" stroke-width="1" />
<rect x="543" y="483" width="10.8" height="4.5" fill="none" stroke="#0f0" stroke-width="1"/>
<rect x="541.2" y="488" width="15" height="4.5" fill="none" stroke="#0f0" stroke-width="1"/>
<polyline points="556.2,488 585,520" fill="none" stroke="#0f0" stroke-width="1" />
<rect x="541.2" y="566.2" width="15.8" height="4" fill="none" stroke="#0f0" stroke-width="1"/>
<rect x="543" y="571" width="12.6" height="3.4" fill="none" stroke="#0f0" stroke-width="1"/>
<polyline points="557,570.2 650.6,539.4" fill="none" stroke="#0f0" stroke-width="1" />
<rect x="605.2" y="616.2" width="10.4" height="4.4" fill="none" stroke="#0f0" stroke-width="1"/>
<rect x="603" y="621.5" width="15" height="4.1" fill="none" stroke="#0f0" stroke-width="1"/>
<polyline points="618,621.5 670.6,517.5" fill="none" stroke="#0f0" stroke-width="1" />
<rect x="660.2" y="616.2" width="10.4" height="4.4" fill="none" stroke="#0f0" stroke-width="1"/>
<rect x="658" y="621.5" width="14.8" height="4.1" fill="none" stroke="#0f0" stroke-width="1"/>
<polyline points="672.8,621.5 712.3,564.5" fill="none" stroke="#0f0" stroke-width="1" />
<rect x="769.4" y="616.2" width="15.4" height="4.4" fill="none" stroke="#0f0" stroke-width="1"/>
<rect x="771.2" y="621.5" width="12.6" height="4.1" fill="none" stroke="#0f0" stroke-width="1"/>
<polyline points="769.4,620.6 733.8,584.4" fill="none" stroke="#0f0" stroke-width="1" />
<polyline points="562.5,515 562.5,529" fill="none" stroke="#0f0" stroke-width="1" />
<polyline points="560,515.6 570,515.6" fill="none" stroke="#0f0" stroke-width="1" />
<polyline points="560,528.4 570,528.4" fill="none" stroke="#0f0" stroke-width="1" />
<rect x="559.4" y="519.4" width="2.6" height="6.2" fill="none" stroke="#0f0" stroke-width="1"/>
<polyline points="616.3,503.4 616.3,531.7" fill="none" stroke="#0f0" stroke-width="1" />
<polyline points="624.4,499 624.4,535" fill="none" stroke="#0f0" stroke-width="1" />
<rect x="612.7" y="513.3" width="2.7" height="8.5" fill="none" stroke="#0f0" stroke-width="1"/>
<polyline points="624.4,513.3 618.7,513.3 618.7,520.4 624.4,520.4" fill="none" stroke="#0f0" stroke-width="1" />
<polyline points="645.6,513.7 654.1,513.7" fill="none" stroke="#0f0" stroke-width="1" />
<polyline points="645.6,530.3 654.1,530.3" fill="none" stroke="#0f0" stroke-width="1" />
<polyline points="653,513.7 653,530.3" fill="none" stroke="#0f0" stroke-width="1" />
<rect x="648.4" y="519.4" width="3.8" height="6.2" fill="none" stroke="#0f0" stroke-width="1"/>
<polyline points="670.2,514.2 670.2,529.4" fill="none" stroke="#0f0" stroke-width="1" />
<polyline points="668.3,515.2 678.6,515.2" fill="none" stroke="#0f0" stroke-width="1" />
<polyline points="668.3,529.4 678.6,529.4" fill="none" stroke="#0f0" stroke-width="1" />
<rect x="664" y="520.4" width="7" height="4.2" fill="none" stroke="#0f0" stroke-width="1"/>
<polyline points="702.5,541.4 702.5,562" fill="none" stroke="#0f0" stroke-width="1" />
<polyline points="725.2,541.4 725.2,562" fill="none" stroke="#0f0" stroke-width="1" />
<polyline points="702.5,560.6 725.2,560.6" fill="none" stroke="#0f0" stroke-width="1" />
<rect x="711.8" y="555.5" width="4.7" height="4.9" fill="none" stroke="#0f0" stroke-width="1"/>
<rect x="711.2" y="576.6" width="6.4" height="3.7" fill="none" stroke="#0f0" stroke-width="1"/>
<polyline points="704.4,580.3 724.4,580.3" fill="none" stroke="#0f0" stroke-width="1" />
<circle cx="620" cy="554" r="3.6" fill="#fff" stroke="#fff" stroke-width="2"/>
<rect x="619.2" y="553.2" width="1.6" height="1.6" fill="#f00" stroke="#f00" stroke-width="0"/>
<circle cx="643" cy="554" r="3.6" fill="#fff" stroke="#fff" stroke-width="2"/>
<rect x="642.2" y="553.2" width="1.6" height="1.6" fill="#f00" stroke="#f00" stroke-width="0"/>
<circle cx="682.8" cy="587.2" r="4.4" fill="#fff" stroke="#fff" stroke-width="2"/>
<rect x="682" y="586.4" width="1.6" height="1.6" fill="#f00" stroke="#f00" stroke-width="0"/></svg>
</div>
<!--BOTTOM-->
<div id="status">
<div class="t" style="left:10px">命令:</div>
<div class="t" style="left:639px">空命令</div>
<div class="t" style="left:746px;font-size:12.5px">X:-89.329, Y:629.696</div>
<div class="t" style="left:959px">屏幕点</div>
<div class="t" style="left:1066px">正交</div>
<div class="abs" style="left:1099px;top:1px;width:42px;height:20px;background:#a9a9a9"></div>
<div class="t" style="left:1108px">线宽</div>
<div class="t" style="left:1150px">动态输入</div>
<div class="t" style="left:1216px">智能</div>
<svg style="left:1244px;top:4px" width="32" height="16" viewBox="1245 700 32 16"><path d="M1249.4,706.4 l3.3,3 l3.3,-3" fill="none" stroke="#444" stroke-width="1.2"/><g fill="#bdbdbd"><rect x="1270" y="706" width="2" height="2"/><rect x="1267" y="709" width="2" height="2"/><rect x="1270" y="709" width="2" height="2"/><rect x="1264" y="712" width="2" height="2"/><rect x="1267" y="712" width="2" height="2"/><rect x="1270" y="712" width="2" height="2"/></g></svg>
</div>
<div class="abs" style="left:0;top:0;width:1280px;height:720px;border:1px solid #0c64cf;border-bottom-width:1.6px;border-radius:8px;z-index:20"></div>
</div>
</body>
</html>
